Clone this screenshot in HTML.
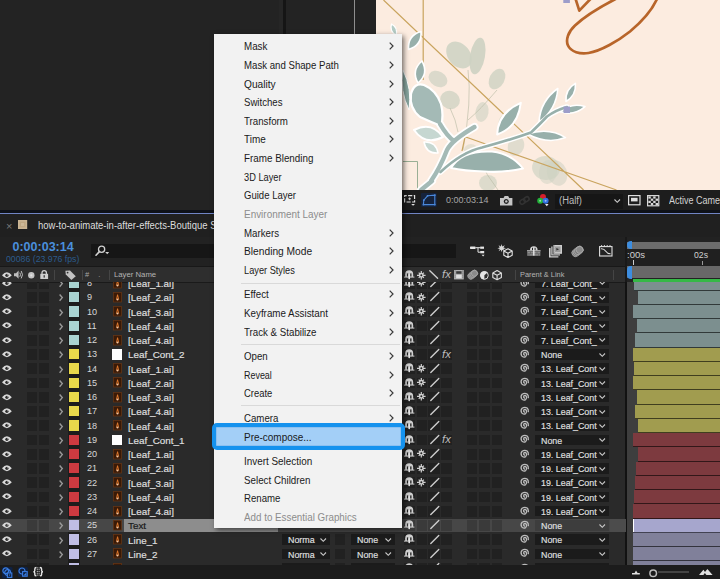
<!DOCTYPE html><html><head><meta charset="utf-8"><title>After Effects</title><style>
*{margin:0;padding:0;box-sizing:border-box}
html,body{width:720px;height:579px;overflow:hidden;background:#232323}
body{position:relative;font-family:"Liberation Sans",sans-serif;font-size:11px;color:#d6d6d6}
.a{position:absolute}
.t{position:absolute;white-space:nowrap;line-height:14px;transform-origin:0 50%}
svg{position:absolute;overflow:visible}
</style></head><body>
<div class="a" style="left:0px;top:0px;width:720px;height:210px;background:#232323;"></div>
<div class="a" style="left:279px;top:0px;width:4.4px;height:210px;background:#262626;"></div>
<div class="a" style="left:283.4px;top:0px;width:2.2px;height:210px;background:#151515;"></div>
<div class="a" style="left:353.9px;top:0px;width:1.4px;height:190px;background:#8e8e8e;"></div>
<svg style="left:376px;top:0" width="344" height="190" viewBox="376 0 344 190"><rect x="376" y="0" width="344" height="190" fill="#fcece0"/><ellipse cx="459" cy="55" rx="11" ry="15" transform="rotate(-40 459 55)" fill="#cdd2c2" opacity="0.85"/><ellipse cx="477.5" cy="56" rx="7.5" ry="18.5" transform="rotate(10 477.5 56)" fill="#cdd2c2" opacity="0.9"/><ellipse cx="497" cy="79" rx="7.5" ry="11" transform="rotate(28 497 79)" fill="#cdd2c2" opacity="0.8"/><ellipse cx="438" cy="79" rx="10" ry="7.5" transform="rotate(30 438 79)" fill="#cdd2c2" opacity="0.7"/><ellipse cx="450" cy="100" rx="10" ry="9" transform="rotate(20 450 100)" fill="#cdd2c2" opacity="0.75"/><ellipse cx="482" cy="112" rx="6.5" ry="10" transform="rotate(10 482 112)" fill="#cdd2c2" opacity="0.6"/><ellipse cx="516" cy="146" rx="8" ry="10" transform="rotate(20 516 146)" fill="#cdd2c2" opacity="0.6"/><ellipse cx="546" cy="168" rx="14" ry="12" transform="rotate(10 546 168)" fill="#cdd2c2" opacity="0.65"/><ellipse cx="488" cy="183" rx="9" ry="8" transform="rotate(0 488 183)" fill="#cdd2c2" opacity="0.65"/><ellipse cx="557" cy="173" rx="10" ry="13" transform="rotate(-20 557 173)" fill="#cdd2c2" opacity="0.55"/><ellipse cx="471" cy="150" rx="7" ry="6" transform="rotate(0 471 150)" fill="#cdd2c2" opacity="0.45"/><ellipse cx="505" cy="121" rx="6" ry="8" transform="rotate(30 505 121)" fill="#cdd2c2" opacity="0.45"/><ellipse cx="548" cy="172" rx="9" ry="12" transform="rotate(10 548 172)" fill="#cdd2c2" opacity="0.5"/><path d="M468 70 Q472 100 463 150 M497 90 Q480 110 468 120 M450 108 Q456 120 458 132 M480 160 Q486 175 498 190" fill="none" stroke="#b9bba6" stroke-width="0.8" opacity=".8"/><path d="M423.2 0 V80 M383.5 0 L583.6 190 M465 136.8 L616.5 190 M465 136.8 L462 151" fill="none" stroke="#c9a45e" stroke-width="1.2"/><path d="M403 161.5 H417.5 V190" fill="none" stroke="#8fa88c" stroke-width="0.9"/><path d="M440 124 Q447 136 454 141 M474.5 127 Q452 140 447 150 Q440 168 431 181 M421 190 L432 181" fill="none" stroke="#ffffff" stroke-width="8" stroke-linecap="round"/><path d="M440.5 172 Q462 152 482 147.5 Q510 140 531 132.5 Q540 124 547 116.5 Q556 110 567 107" fill="none" stroke="#ffffff" stroke-width="5.5" stroke-linecap="round"/><path d="M408.5 49.5 Q422.0 45.5 421.0 31.5 Q407.5 35.5 408.5 49.5Z" fill="#98b0ab" stroke="#ffffff" stroke-width="1.6" stroke-linejoin="round"/><path d="M396.0 35.0 Q398.2 27.7 391.5 24.0 Q389.3 31.3 396.0 35.0Z" fill="#b3cbc4" stroke="#ffffff" stroke-width="1.2" stroke-linejoin="round"/><path d="M418.0 83.0 Q429.1 73.6 422.0 61.0 Q410.9 70.4 418.0 83.0Z" fill="#98b0ab" stroke="#ffffff" stroke-width="1.6" stroke-linejoin="round"/><path d="M403.0 70.0 Q399.7 90.9 409.0 110.0 Q412.3 89.1 403.0 70.0Z" fill="#86a49e" stroke="#ffffff" stroke-width="1" stroke-linejoin="round"/><path d="M441 126 Q431 122 420 117 Q409 108 411 94 Q414 82 424 85 Q436 90 441 104 Q444 116 441 126Z" fill="#a4bab6" stroke="#ffffff" stroke-width="2.2" stroke-linejoin="round"/><path d="M443.0 137.0 Q431.6 120.9 414.0 130.0 Q425.4 146.1 443.0 137.0Z" fill="#c6d7d1" stroke="#ffffff" stroke-width="2" stroke-linejoin="round"/><path d="M424.0 142.0 Q426.1 153.8 438.0 153.0 Q435.9 141.2 424.0 142.0Z" fill="#c6d7d1" stroke="#ffffff" stroke-width="1.5" stroke-linejoin="round"/><path d="M497.2 134.5 Q517.8 127.6 520.8 102.8 Q497.9 112.8 497.2 134.5Z" fill="#98b0ab" stroke="#ffffff" stroke-width="2" stroke-linejoin="round"/><path d="M451 168 Q462 150 492 151.5 Q512 154 523 168.5 Q503 173 484 171.5 Q464 171 451 168Z" fill="#98b0ab" stroke="#ffffff" stroke-width="2" stroke-linejoin="round"/><path d="M539.0 122.0 Q556.4 109.8 557.8 88.5 Q540.4 100.7 539.0 122.0Z" fill="#98b0ab" stroke="#ffffff" stroke-width="1.6" stroke-linejoin="round"/><path d="M566.0 101.5 Q576.4 95.4 575.4 83.4 Q565.0 89.5 566.0 101.5Z" fill="#98b0ab" stroke="#ffffff" stroke-width="1.6" stroke-linejoin="round"/><path d="M560.5 111.8 Q574.2 116.2 585.0 106.6 Q571.3 102.2 560.5 111.8Z" fill="#98b0ab" stroke="#ffffff" stroke-width="1.6" stroke-linejoin="round"/><path d="M527.5 134.0 Q547.6 144.7 565.5 137.6 Q549.2 127.2 527.5 134.0Z" fill="#98b0ab" stroke="#ffffff" stroke-width="1.6" stroke-linejoin="round"/><path d="M440 124 Q447 136 454 141 M474.5 127 Q452 140 447 150 Q440 168 431 181 M421 190 L432 181" fill="none" stroke="#a4bab6" stroke-width="4.4" stroke-linecap="round"/><path d="M440.5 172 Q462 152 482 147.5 Q510 140 531 132.5 Q540 124 547 116.5 Q556 110 567 107" fill="none" stroke="#98b0ab" stroke-width="2.6" stroke-linecap="round"/><rect x="563.3" y="0" width="6.6" height="3" fill="#9d9dca"/><rect x="563.6" y="106.5" width="6.4" height="6.5" fill="#9d9dca"/><path d="M615.5 -1 C600 7 585 16 575 25.5 C568 32 565.5 40 568 45.5 C571 52 580 54.3 588.5 53 C601 51 618 41 630 31.5 C642 21.5 652 10 657 -1 M575.6 -1 L579.3 10.6 L590.5 -1" fill="none" stroke="#b8652a" stroke-width="2.7" stroke-linecap="round" stroke-linejoin="round"/></svg>
<div class="a" style="left:355px;top:190px;width:365px;height:21px;background:#1d1d1d;"></div>
<svg style="left:404.4px;top:194.6px" width="11.4" height="11" viewBox="0 0 11.4 11"><rect x="0.6" y="0.6" width="10" height="6.4" fill="none" stroke="#e0e0e0" stroke-width="1.2" stroke-dasharray="4.2 1.4" stroke-dashoffset="2.1"/><path d="M5.6 2.4 V5.2 M4.2 3.8 H7" stroke="#e0e0e0" stroke-width=".8"/><path d="M7.2 9 H11 L9.1 10.7Z" fill="#e0e0e0"/></svg>
<svg style="left:421px;top:192.8px" width="15.8" height="14" viewBox="0 0 15.8 14"><rect x="0" y="0" width="15.8" height="14" rx="1" fill="#15233d"/><path d="M6.6 2.8 L13.8 2.2 L13.8 11.6 L2.4 11.6 L2.8 7.2Z" fill="none" stroke="#4a88da" stroke-width="1.1"/><g fill="#4a88da"><rect x="5.8" y="2" width="1.6" height="1.6"/><rect x="13" y="1.4" width="1.6" height="1.6"/><rect x="13" y="10.8" width="1.6" height="1.6"/><rect x="1.6" y="10.8" width="1.6" height="1.6"/><rect x="2" y="6.4" width="1.6" height="1.6"/></g></svg>
<div class="t" style="left:446px;top:193.4px;font-size:9px;color:#a6a6a6;">0:00:03:14</div>
<svg style="left:500px;top:196px" width="12.4" height="9.4" viewBox="0 0 12.4 9.4"><path d="M0 2 H3.6 L4.6 0 H8.2 L9.2 2 H12.4 V9.4 H0Z" fill="#c6c6c6"/><circle cx="6.3" cy="5.4" r="2.5" fill="#1e1e1e"/><circle cx="6.3" cy="5.4" r="1.2" fill="#c6c6c6"/></svg>
<svg style="left:518.8px;top:196px" width="11" height="9" viewBox="0 0 11 9"><g fill="none" stroke="#323232" stroke-width="1.6"><rect x="0.8" y="3.6" width="5.6" height="4.2" rx="2.1" transform="rotate(-35 3.6 5.7)"/><rect x="4.6" y="1.2" width="5.6" height="4.2" rx="2.1" transform="rotate(-35 7.4 3.3)"/></g></svg>
<svg style="left:536.8px;top:194px" width="12" height="10.4" viewBox="0 0 12 10.4"><circle cx="6" cy="3" r="3" fill="#d61f2c"/><circle cx="3.2" cy="6.7" r="3" fill="#22b33a"/><circle cx="8.6" cy="6.7" r="3" fill="#2f6fe0"/><circle cx="3.2" cy="6.7" r="1" fill="#9be0a4"/><circle cx="8.6" cy="6.7" r="1" fill="#9cbcf2"/></svg><svg style="left:545.1px;top:204.2px" width="3.6" height="2.2" viewBox="0 0 3.6 2.2"><path d="M0 0 H3.6 L1.8 2.2Z" fill="#e8e8e8"/></svg>
<div class="a" style="left:555px;top:194px;width:68px;height:14.5px;background:#161616;"></div>
<div class="t" style="left:559px;top:193.8px;font-size:10px;color:#bdbdbd;transform:scaleX(0.941);">(Half)</div>
<svg style="left:614px;top:199.1px" width="6.5" height="4" viewBox="0 0 6.5 4"><path d="M0.5 0.5 L3.25 3.3 L6 0.5" fill="none" stroke="#c8c8c8" stroke-width="1.1"/></svg>
<svg style="left:628.4px;top:195px" width="12.6" height="10.4" viewBox="0 0 12.6 10.4"><rect x="0.6" y="0.6" width="11.4" height="9.2" fill="none" stroke="#e0e0e0" stroke-width="1.2"/><rect x="3" y="2.8" width="6.6" height="3.6" fill="#e0e0e0"/></svg>
<svg style="left:647px;top:194.6px" width="12.4" height="11.4" viewBox="0 0 12.4 11.4"><rect x="0.6" y="0.6" width="11.2" height="10.2" fill="none" stroke="#d8d8d8" stroke-width="1.2"/><rect x="1.4" y="1.4" width="2.4" height="2.2" fill="#d8d8d8"/><rect x="1.4" y="5.8" width="2.4" height="2.2" fill="#d8d8d8"/><rect x="3.8" y="3.6" width="2.4" height="2.2" fill="#d8d8d8"/><rect x="3.8" y="8" width="2.4" height="2.2" fill="#d8d8d8"/><rect x="6.2" y="1.4" width="2.4" height="2.2" fill="#d8d8d8"/><rect x="6.2" y="5.8" width="2.4" height="2.2" fill="#d8d8d8"/><rect x="8.6" y="3.6" width="2.4" height="2.2" fill="#d8d8d8"/><rect x="8.6" y="8" width="2.4" height="2.2" fill="#d8d8d8"/></svg>
<div class="t" style="left:669px;top:193.8px;font-size:10px;color:#d2d2d2;transform:scaleX(0.900);">Active Camera</div>
<div class="a" style="left:0px;top:209.5px;width:720px;height:3px;background:#0e1118;"></div>
<div class="a" style="left:0px;top:212.5px;width:720px;height:1.8px;background:#7084c4;"></div>
<div class="a" style="left:0px;top:214.2px;width:720px;height:365px;background:#222222;"></div>
<div class="a" style="left:0px;top:214.2px;width:720px;height:22.8px;background:#202020;"></div>
<div class="t" style="left:6px;top:218.5px;font-size:11px;color:#7a7a7a;">×</div>
<svg style="left:18.2px;top:220.2px" width="9.2" height="9" viewBox="0 0 9.2 9"><rect x="0" y="0" width="9.2" height="9" fill="#cbb594"/><rect x="1.6" y="1.6" width="6" height="5.8" fill="#bfa783"/><rect x="3" y="3" width="3.2" height="3" fill="#cdb898"/></svg>
<div class="t" style="left:38px;top:218.2px;font-size:11px;color:#dddddd;transform:scaleX(0.862);">how-to-animate-in-after-effects-Boutique Shop</div>
<div class="t" style="left:12.5px;top:239.5px;font-size:12.5px;color:#4a8fdc;font-weight:bold;">0:00:03:14</div>
<div class="t" style="left:6.3px;top:252px;font-size:9px;color:#2c5b8c;transform:scaleX(0.971);">00086 (23.976 fps)</div>
<div class="a" style="left:91.3px;top:243.9px;width:364.5px;height:14.2px;background:#161616;"></div>
<svg style="left:95.3px;top:245px" width="15" height="11" viewBox="0 0 15 11"><circle cx="6.6" cy="4.2" r="3.1" fill="none" stroke="#d0d0d0" stroke-width="1.3"/><path d="M4.4 6.6 L1 10.2" stroke="#d0d0d0" stroke-width="1.6" stroke-linecap="round"/><path d="M10.2 7 H14.2 L12.2 9.2Z" fill="#d0d0d0"/></svg>
<svg style="left:469.6px;top:246.4px" width="15" height="11" viewBox="0 0 15 11"><rect x="0" y="0.6" width="5.6" height="2.3" rx=".6" fill="#e6e6e6"/><path d="M5.6 1.7 H10.5 M8 1.7 V6.2 H10.4" fill="none" stroke="#e6e6e6" stroke-width="1"/><rect x="10.2" y="0.6" width="3.8" height="2.2" fill="#e6e6e6"/><rect x="10.2" y="5" width="4" height="2.3" fill="#e6e6e6"/><path d="M11.6 8.8 H14.6 L13.1 10.5Z" fill="#e6e6e6"/></svg>
<svg style="left:497.6px;top:244px" width="15" height="14" viewBox="0 0 15 14"><path d="M3.6 0 L4.3 2.6 L6.8 1.2 L5.4 3.6 L8 4.2 L5.4 4.9 L6.6 7.2 L4.3 5.8 L3.6 8.2 L2.9 5.8 L0.6 7.2 L1.8 4.9 L-.6 4.2 L1.8 3.6 L0.6 1.2 L2.9 2.6Z" fill="#d8d8d8"/><path d="M10 4.8 L14.2 7 V11.3 L10 13.5 L5.8 11.3 V7Z M5.8 7 L10 9.2 L14.2 7 M10 9.2 V13.5" fill="none" stroke="#e2e2e2" stroke-width="1.1" stroke-linejoin="round"/></svg>
<svg style="left:527.4px;top:246px" width="13.6" height="10" viewBox="0 0 13.6 10"><path d="M3 4.2 Q3 0.3 6.8 0.3 Q10.6 0.3 10.6 4.2Z" fill="#d6d6d6"/><rect x="0" y="4.3" width="13.6" height="1.1" fill="#d6d6d6"/><rect x="0.3" y="5.8" width="13" height="4" fill="#8e8e8e"/><path d="M0.3 7.8 H13.3 M3.5 5.8 V7.8 M10 5.8 V7.8 M2 7.8 V9.8 M11.6 7.8 V9.8" stroke="#555" stroke-width=".6"/><rect x="6.1" y="2.4" width="1.4" height="7.2" fill="#e6e6e6"/><rect x="5" y="1.8" width="1" height="2.3" fill="#222"/><rect x="7.6" y="1.8" width="1" height="2.3" fill="#222"/></svg>
<svg style="left:549.3px;top:244.8px" width="13.4" height="12.8" viewBox="0 0 13.4 12.8"><path d="M0 3 H1.6 V11.2 H9.4 V12.6 H0Z" fill="#d0d0d0"/><path d="M2.2 1.6 H3.6 V9.2 H11 V10.6 H2.2Z" fill="#bcbcbc"/><rect x="4.4" y="0" width="8.6" height="8.8" fill="#cfcfcf"/><rect x="6" y="1.4" width="5.6" height="5.8" fill="#9a9a9a"/><path d="M7.4 3 L10 4.3 L7.4 5.6Z" fill="#2a2a2a"/><path d="M5.2 .6 V8.2" stroke="#555" stroke-width=".7" stroke-dasharray="1 1"/></svg>
<svg style="left:571px;top:245.995px" width="13.11" height="10.81" viewBox="0 0 11.4 9.4"><g transform="rotate(-38 5.7 4.7)"><rect x="0.3" y="1.5" width="10.8" height="6.4" rx="3.2" fill="#7c7c7c" stroke="#a8a8a8" stroke-width=".7"/><circle cx="7.9" cy="4.7" r="3" fill="#8a8a8a" stroke="#b0b0b0" stroke-width=".6"/><path d="M5 1.9 A3 3 0 0 0 5 7.5 M2.9 2.3 A3 3 0 0 0 2.9 7.1" fill="none" stroke="#b0b0b0" stroke-width=".6"/></g></svg>
<svg style="left:599.4px;top:245.4px" width="13.6" height="11.6" viewBox="0 0 13.6 11.6"><rect x="0.6" y="1.6" width="12.4" height="9.4" fill="none" stroke="#e0e0e0" stroke-width="1.1"/><path d="M2.6 0 V1.6 M5.4 0 V1.6 M8.2 0 V1.6 M11 0 V1.6" stroke="#e0e0e0" stroke-width=".9"/><path d="M2 3.8 Q5 3.6 6.8 6.3 Q8.6 9 11.6 8.8" fill="none" stroke="#e0e0e0" stroke-width="1.1"/></svg>
<div class="a" style="left:0px;top:265.6px;width:626px;height:1.4px;background:#181818;"></div>
<div class="a" style="left:0px;top:267px;width:626px;height:14.6px;background:#2e2e2e;"></div>
<svg style="left:2px;top:272px" width="9.8" height="6.2" viewBox="0 0 9.8 6.2"><path d="M0 3.3 Q4.9 -2.6 9.8 3.3 Q4.9 9.2 0 3.3Z" fill="#d9d9d9"/><circle cx="4.9" cy="3.3" r="1.6" fill="#2e2e2e"/><circle cx="5.5" cy="2.7" r=".5" fill="#d9d9d9"/></svg>
<svg style="left:14.2px;top:270.3px" width="10" height="9.4" viewBox="0 0 10 9.4"><path d="M0 3.2 H2 L4.6 0.6 V8.8 L2 6.2 H0Z" fill="#bdbdbd"/><path d="M5.8 2.6 Q7.2 4.7 5.8 6.8 M7.2 1 Q9.8 4.7 7.2 8.4" fill="none" stroke="#bdbdbd" stroke-width="1"/></svg>
<svg style="left:28.4px;top:271.9px" width="6.6" height="6.6" viewBox="0 0 6.6 6.6"><circle cx="3.3" cy="3.3" r="3.2" fill="#c4c4c4"/><circle cx="3.3" cy="3.3" r="1.1" fill="#e2e2e2"/></svg>
<svg style="left:40px;top:270px" width="8.4" height="9.2" viewBox="0 0 8.4 9.2"><path d="M2 4 V2.8 Q2 0.6 4.2 0.6 Q6.4 0.6 6.4 2.8 V4" fill="none" stroke="#cfcfcf" stroke-width="1.3"/><rect x="0.3" y="3.8" width="7.8" height="5.2" fill="#cfcfcf"/><rect x="3.6" y="5.2" width="1.2" height="2.4" fill="#2e2e2e"/></svg>
<svg style="left:65.2px;top:270px" width="11.2" height="10.2" viewBox="0 0 11.2 10.2"><path d="M0.4 0.8 L5 0.4 L10.8 6.2 L6.4 10 L0.8 4.6Z" fill="#c2c2c2"/><circle cx="2.6" cy="2.6" r="0.9" fill="#2e2e2e"/></svg>
<div class="t" style="left:85px;top:267.8px;font-size:7.5px;color:#a8a8a8;">#</div>
<div class="t" style="left:98.3px;top:268.4px;font-size:7.5px;color:#a8a8a8;">.</div>
<div class="t" style="left:113.8px;top:267.8px;font-size:8px;color:#b4b4b4;transform:scaleX(0.968);">Layer Name</div>
<svg style="left:404.2px;top:270.1px" width="10.4" height="9.4" viewBox="0 0 10.4 9.4"><path d="M1.2 6.9 V4.2 Q1.2 0.3 5.2 0.3 Q9.2 0.3 9.2 4.2 V6.9Z" fill="#cfcfcf"/><rect x="0" y="6.6" width="10.4" height="1" fill="#cfcfcf"/><rect x="2.9" y="3.4" width="1.3" height="3.1" fill="#2e2e2e"/><rect x="6.2" y="3.4" width="1.3" height="3.1" fill="#2e2e2e"/><rect x="4.4" y="4" width="1.6" height="5.2" rx=".7" fill="#e6e6e6"/></svg>
<svg style="left:417.2px;top:270.7px" width="8.6" height="8.6" viewBox="0 0 8.6 8.6"><path d="M4.3 0 V8.6 M0 4.3 H8.6" stroke="#d0d0d0" stroke-width="1.2"/><path d="M1.7 1.7 L6.9 6.9 M6.9 1.7 L1.7 6.9" stroke="#d0d0d0" stroke-width="1.2"/><circle cx="4.3" cy="4.3" r="2.5" fill="#d0d0d0"/><circle cx="4.3" cy="4.3" r="1" fill="#222"/></svg>
<svg style="left:428.7px;top:269.9px" width="9.4" height="9.2" viewBox="0 0 9.4 9.2"><path d="M0.8 0.8 L8.6 8.2" stroke="#cfcfcf" stroke-width="1.4" stroke-linecap="round"/></svg>
<div class="t" style="left:442px;top:267.4px;font-size:10.5px;color:#bdbdbd;transform:scaleX(1.078);font-style:italic;">fx</div>
<svg style="left:454px;top:270.3px" width="9.8" height="9.4" viewBox="0 0 9.8 9.4"><rect x="0" y="0" width="9.8" height="9.4" fill="#b4b4b4"/><rect x="2.2" y="1.2" width="5.4" height="2.6" fill="#3a3a3a"/><rect x="2.2" y="5" width="5.4" height="3.2" fill="#e0e0e0"/><path d="M1.1 0.6 V8.8 M8.7 0.6 V8.8" stroke="#555" stroke-width=".8" stroke-dasharray="1 1"/></svg>
<svg style="left:466.7px;top:270.3px" width="11.4" height="9.4" viewBox="0 0 11.4 9.4"><g transform="rotate(-38 5.7 4.7)"><rect x="0.3" y="1.5" width="10.8" height="6.4" rx="3.2" fill="#828282" stroke="#a8a8a8" stroke-width=".7"/><circle cx="7.9" cy="4.7" r="3" fill="#8a8a8a" stroke="#b0b0b0" stroke-width=".6"/><path d="M5 1.9 A3 3 0 0 0 5 7.5 M2.9 2.3 A3 3 0 0 0 2.9 7.1" fill="none" stroke="#b0b0b0" stroke-width=".6"/></g></svg>
<svg style="left:480px;top:270.9px" width="8.7" height="8.7" viewBox="0 0 8.7 8.7"><circle cx="4.35" cy="4.35" r="4.2" fill="#e4e4e4"/><path d="M4.35 4.35 L7.6 1.4 A4.2 4.2 0 0 1 4.35 8.55 Z" fill="#2e2e2e"/><circle cx="4.35" cy="4.35" r="3.9" fill="none" stroke="#e4e4e4" stroke-width=".9"/></svg>
<svg style="left:491.8px;top:270.1px" width="10.2" height="10.2" viewBox="0 0 10.2 10.2"><path d="M5.1 0.6 L9.4 2.9 V7.5 L5.1 9.7 L0.8 7.5 V2.9Z M0.8 2.9 L5.1 5.2 L9.4 2.9 M5.1 5.2 V9.7" fill="none" stroke="#dcdcdc" stroke-width="1.15" stroke-linejoin="round"/></svg>
<div class="t" style="left:519.5px;top:267.8px;font-size:8px;color:#b4b4b4;transform:scaleX(0.924);">Parent &amp; Link</div>
<div class="a" style="left:54.4px;top:270px;width:1px;height:10px;background:#454545;"></div>
<div class="a" style="left:81.5px;top:270px;width:1px;height:10px;background:#454545;"></div>
<div class="a" style="left:108.8px;top:270px;width:1px;height:10px;background:#454545;"></div>
<div class="a" style="left:514.6px;top:270px;width:1px;height:10px;background:#454545;"></div>
<div class="a" style="left:613.4px;top:270px;width:1px;height:10px;background:#454545;"></div>
<div class="a" style="left:0;top:281.6px;width:720px;height:283.4px;overflow:hidden;background:#2a2a2a"><div class="a" style="left:0;top:-281.6px;width:720px;height:579px">
<div class="a" style="left:0px;top:281.6px;width:626px;height:1px;background:#1a1a1a;"></div>
<div class="a" style="left:68.4px;top:281.6px;width:11.6px;height:284px;background:#1c1c1c;"></div>
<div class="a" style="left:625.4px;top:282px;width:94.6px;height:284px;background:#3e3e3e;"></div>
<div class="a" style="left:625.4px;top:237px;width:1.8px;height:329px;background:#121212;"></div>
<div class="a" style="left:26.7px;top:277.75px;width:10.3px;height:10.8px;background:#212121;"></div>
<div class="a" style="left:39px;top:277.75px;width:10.3px;height:10.8px;background:#212121;"></div>
<div class="a" style="left:403.8px;top:277.75px;width:11.4px;height:10.8px;background:#212121;"></div>
<div class="a" style="left:416.8px;top:277.75px;width:9.9px;height:10.8px;background:#212121;"></div>
<div class="a" style="left:428.4px;top:277.75px;width:11.3px;height:10.8px;background:#212121;"></div>
<div class="a" style="left:441.4px;top:277.75px;width:10.6px;height:10.8px;background:#212121;"></div>
<div class="a" style="left:466.7px;top:277.75px;width:10.4px;height:10.8px;background:#212121;"></div>
<div class="a" style="left:479.4px;top:277.75px;width:10.4px;height:10.8px;background:#212121;"></div>
<div class="a" style="left:491.7px;top:277.75px;width:10.7px;height:10.8px;background:#212121;"></div>
<svg style="left:2px;top:279.65px" width="9.8" height="6.2" viewBox="0 0 9.8 6.2"><path d="M0 3.3 Q4.9 -2.6 9.8 3.3 Q4.9 9.2 0 3.3Z" fill="#d9d9d9"/><circle cx="4.9" cy="3.3" r="1.6" fill="#2a2a2a"/><circle cx="5.5" cy="2.7" r=".5" fill="#d9d9d9"/></svg>
<svg style="left:59.3px;top:280.05px" width="4" height="7.2" viewBox="0 0 4 7.2"><path d="M0.6 0.5 L3.3 3.6 L0.6 6.7" fill="none" stroke="#9a9a9a" stroke-width="1.4"/></svg>
<div class="a" style="left:69px;top:277.85px;width:10.3px;height:10.2px;background:#a9d3d1;"></div>
<div class="t" style="left:87.2px;top:276.05px;font-size:9.6px;color:#d8d8d8;transform:scaleX(0.950);">8</div>
<svg style="left:113.2px;top:277.65px" width="8.8" height="10.4" viewBox="0 0 8.8 10.4"><rect x="0.4" y="0.4" width="8" height="9.6" fill="#3a1a07" stroke="#633414" stroke-width=".8"/><path d="M3 7.6 L4.1 2.4 L5 2.4 L6.2 7.6 L5.2 7.6 L4.6 4.6 L4 7.6Z" fill="#d8742a"/><ellipse cx="4.5" cy="7.6" rx="1" ry="1" fill="#f3c7a2"/></svg>
<div class="t" style="left:128.2px;top:277.05px;font-size:9.5px;color:#dedede;transform:scaleX(1.037);-webkit-text-stroke:.2px;">[Leaf_1.ai]</div>
<svg style="left:404.2px;top:277.85px" width="10.4" height="9.4" viewBox="0 0 10.4 9.4"><path d="M1.2 6.9 V4.2 Q1.2 0.3 5.2 0.3 Q9.2 0.3 9.2 4.2 V6.9Z" fill="#cfcfcf"/><rect x="0" y="6.6" width="10.4" height="1" fill="#cfcfcf"/><rect x="2.9" y="3.4" width="1.3" height="3.1" fill="#212121"/><rect x="6.2" y="3.4" width="1.3" height="3.1" fill="#212121"/><rect x="4.4" y="4" width="1.6" height="5.2" rx=".7" fill="#e6e6e6"/></svg>
<svg style="left:417.3px;top:278.45px" width="8.6" height="8.6" viewBox="0 0 8.6 8.6"><path d="M4.3 0 V8.6 M0 4.3 H8.6" stroke="#d0d0d0" stroke-width="1.2"/><path d="M1.7 1.7 L6.9 6.9 M6.9 1.7 L1.7 6.9" stroke="#d0d0d0" stroke-width="1.2"/><circle cx="4.3" cy="4.3" r="2.5" fill="#d0d0d0"/><circle cx="4.3" cy="4.3" r="1" fill="#222"/></svg>
<svg style="left:429.7px;top:278.15px" width="9.4" height="9.2" viewBox="0 0 9.4 9.2"><path d="M0.8 8.6 L8.8 0.6" stroke="#cfcfcf" stroke-width="1.4" stroke-linecap="round"/></svg>
<svg style="left:518.6px;top:277.65px" width="10.4" height="10.4" viewBox="0 0 10 10"><path d="M5.3 5.9 Q4 5.2 4.6 3.9 Q5.8 2.8 7 4 Q8 5.8 6.4 7.3 Q4.2 8.5 2.6 6.6 Q1.2 4.2 3 2.2 Q5.4 0.4 7.8 2 Q9.2 3.4 9 5.4" fill="none" stroke="#bcbcbc" stroke-width="1.25" stroke-linecap="round"/></svg>
<div class="a" style="left:535.2px;top:277.85px;width:74.2px;height:10.6px;background:#1b1b1b;"></div>
<div class="t" style="left:540.8px;top:276.95px;font-size:9px;color:#dedede;transform:scaleX(0.985);-webkit-text-stroke:.2px;">7. Leaf_Cont_</div>
<svg style="left:599px;top:281.35px" width="6.5" height="4" viewBox="0 0 6.5 4"><path d="M0.5 0.5 L3.25 3.3 L6 0.5" fill="none" stroke="#c8c8c8" stroke-width="1.1"/></svg>
<div class="a" style="left:634.2px;top:276.25px;width:85.8px;height:14.25px;background:#7c8f8f;border-bottom:1.2px solid rgba(0,0,0,.6)"></div>
<div class="a" style="left:26.7px;top:292px;width:10.3px;height:10.8px;background:#212121;"></div>
<div class="a" style="left:39px;top:292px;width:10.3px;height:10.8px;background:#212121;"></div>
<div class="a" style="left:403.8px;top:292px;width:11.4px;height:10.8px;background:#212121;"></div>
<div class="a" style="left:416.8px;top:292px;width:9.9px;height:10.8px;background:#212121;"></div>
<div class="a" style="left:428.4px;top:292px;width:11.3px;height:10.8px;background:#212121;"></div>
<div class="a" style="left:441.4px;top:292px;width:10.6px;height:10.8px;background:#212121;"></div>
<div class="a" style="left:466.7px;top:292px;width:10.4px;height:10.8px;background:#212121;"></div>
<div class="a" style="left:479.4px;top:292px;width:10.4px;height:10.8px;background:#212121;"></div>
<div class="a" style="left:491.7px;top:292px;width:10.7px;height:10.8px;background:#212121;"></div>
<svg style="left:2px;top:293.9px" width="9.8" height="6.2" viewBox="0 0 9.8 6.2"><path d="M0 3.3 Q4.9 -2.6 9.8 3.3 Q4.9 9.2 0 3.3Z" fill="#d9d9d9"/><circle cx="4.9" cy="3.3" r="1.6" fill="#2a2a2a"/><circle cx="5.5" cy="2.7" r=".5" fill="#d9d9d9"/></svg>
<svg style="left:59.3px;top:294.3px" width="4" height="7.2" viewBox="0 0 4 7.2"><path d="M0.6 0.5 L3.3 3.6 L0.6 6.7" fill="none" stroke="#9a9a9a" stroke-width="1.4"/></svg>
<div class="a" style="left:69px;top:292.1px;width:10.3px;height:10.2px;background:#a9d3d1;"></div>
<div class="t" style="left:87.2px;top:290.3px;font-size:9.6px;color:#d8d8d8;transform:scaleX(0.950);">9</div>
<svg style="left:113.2px;top:291.9px" width="8.8" height="10.4" viewBox="0 0 8.8 10.4"><rect x="0.4" y="0.4" width="8" height="9.6" fill="#3a1a07" stroke="#633414" stroke-width=".8"/><path d="M3 7.6 L4.1 2.4 L5 2.4 L6.2 7.6 L5.2 7.6 L4.6 4.6 L4 7.6Z" fill="#d8742a"/><ellipse cx="4.5" cy="7.6" rx="1" ry="1" fill="#f3c7a2"/></svg>
<div class="t" style="left:128.2px;top:291.3px;font-size:9.5px;color:#dedede;transform:scaleX(1.037);-webkit-text-stroke:.2px;">[Leaf_2.ai]</div>
<svg style="left:404.2px;top:292.1px" width="10.4" height="9.4" viewBox="0 0 10.4 9.4"><path d="M1.2 6.9 V4.2 Q1.2 0.3 5.2 0.3 Q9.2 0.3 9.2 4.2 V6.9Z" fill="#cfcfcf"/><rect x="0" y="6.6" width="10.4" height="1" fill="#cfcfcf"/><rect x="2.9" y="3.4" width="1.3" height="3.1" fill="#212121"/><rect x="6.2" y="3.4" width="1.3" height="3.1" fill="#212121"/><rect x="4.4" y="4" width="1.6" height="5.2" rx=".7" fill="#e6e6e6"/></svg>
<svg style="left:417.3px;top:292.7px" width="8.6" height="8.6" viewBox="0 0 8.6 8.6"><path d="M4.3 0 V8.6 M0 4.3 H8.6" stroke="#d0d0d0" stroke-width="1.2"/><path d="M1.7 1.7 L6.9 6.9 M6.9 1.7 L1.7 6.9" stroke="#d0d0d0" stroke-width="1.2"/><circle cx="4.3" cy="4.3" r="2.5" fill="#d0d0d0"/><circle cx="4.3" cy="4.3" r="1" fill="#222"/></svg>
<svg style="left:429.7px;top:292.4px" width="9.4" height="9.2" viewBox="0 0 9.4 9.2"><path d="M0.8 8.6 L8.8 0.6" stroke="#cfcfcf" stroke-width="1.4" stroke-linecap="round"/></svg>
<svg style="left:518.6px;top:291.9px" width="10.4" height="10.4" viewBox="0 0 10 10"><path d="M5.3 5.9 Q4 5.2 4.6 3.9 Q5.8 2.8 7 4 Q8 5.8 6.4 7.3 Q4.2 8.5 2.6 6.6 Q1.2 4.2 3 2.2 Q5.4 0.4 7.8 2 Q9.2 3.4 9 5.4" fill="none" stroke="#bcbcbc" stroke-width="1.25" stroke-linecap="round"/></svg>
<div class="a" style="left:535.2px;top:292.1px;width:74.2px;height:10.6px;background:#1b1b1b;"></div>
<div class="t" style="left:540.8px;top:291.2px;font-size:9px;color:#dedede;transform:scaleX(0.985);-webkit-text-stroke:.2px;">7. Leaf_Cont_</div>
<svg style="left:599px;top:295.6px" width="6.5" height="4" viewBox="0 0 6.5 4"><path d="M0.5 0.5 L3.25 3.3 L6 0.5" fill="none" stroke="#c8c8c8" stroke-width="1.1"/></svg>
<div class="a" style="left:638.3px;top:290.5px;width:81.7px;height:14.25px;background:#7c8f8f;border-bottom:1.2px solid rgba(0,0,0,.6)"></div>
<div class="a" style="left:26.7px;top:306.25px;width:10.3px;height:10.8px;background:#212121;"></div>
<div class="a" style="left:39px;top:306.25px;width:10.3px;height:10.8px;background:#212121;"></div>
<div class="a" style="left:403.8px;top:306.25px;width:11.4px;height:10.8px;background:#212121;"></div>
<div class="a" style="left:416.8px;top:306.25px;width:9.9px;height:10.8px;background:#212121;"></div>
<div class="a" style="left:428.4px;top:306.25px;width:11.3px;height:10.8px;background:#212121;"></div>
<div class="a" style="left:441.4px;top:306.25px;width:10.6px;height:10.8px;background:#212121;"></div>
<div class="a" style="left:466.7px;top:306.25px;width:10.4px;height:10.8px;background:#212121;"></div>
<div class="a" style="left:479.4px;top:306.25px;width:10.4px;height:10.8px;background:#212121;"></div>
<div class="a" style="left:491.7px;top:306.25px;width:10.7px;height:10.8px;background:#212121;"></div>
<svg style="left:2px;top:308.15px" width="9.8" height="6.2" viewBox="0 0 9.8 6.2"><path d="M0 3.3 Q4.9 -2.6 9.8 3.3 Q4.9 9.2 0 3.3Z" fill="#d9d9d9"/><circle cx="4.9" cy="3.3" r="1.6" fill="#2a2a2a"/><circle cx="5.5" cy="2.7" r=".5" fill="#d9d9d9"/></svg>
<svg style="left:59.3px;top:308.55px" width="4" height="7.2" viewBox="0 0 4 7.2"><path d="M0.6 0.5 L3.3 3.6 L0.6 6.7" fill="none" stroke="#9a9a9a" stroke-width="1.4"/></svg>
<div class="a" style="left:69px;top:306.35px;width:10.3px;height:10.2px;background:#a9d3d1;"></div>
<div class="t" style="left:87.2px;top:304.55px;font-size:9.6px;color:#d8d8d8;transform:scaleX(0.950);">10</div>
<svg style="left:113.2px;top:306.15px" width="8.8" height="10.4" viewBox="0 0 8.8 10.4"><rect x="0.4" y="0.4" width="8" height="9.6" fill="#3a1a07" stroke="#633414" stroke-width=".8"/><path d="M3 7.6 L4.1 2.4 L5 2.4 L6.2 7.6 L5.2 7.6 L4.6 4.6 L4 7.6Z" fill="#d8742a"/><ellipse cx="4.5" cy="7.6" rx="1" ry="1" fill="#f3c7a2"/></svg>
<div class="t" style="left:128.2px;top:305.55px;font-size:9.5px;color:#dedede;transform:scaleX(1.037);-webkit-text-stroke:.2px;">[Leaf_3.ai]</div>
<svg style="left:404.2px;top:306.35px" width="10.4" height="9.4" viewBox="0 0 10.4 9.4"><path d="M1.2 6.9 V4.2 Q1.2 0.3 5.2 0.3 Q9.2 0.3 9.2 4.2 V6.9Z" fill="#cfcfcf"/><rect x="0" y="6.6" width="10.4" height="1" fill="#cfcfcf"/><rect x="2.9" y="3.4" width="1.3" height="3.1" fill="#212121"/><rect x="6.2" y="3.4" width="1.3" height="3.1" fill="#212121"/><rect x="4.4" y="4" width="1.6" height="5.2" rx=".7" fill="#e6e6e6"/></svg>
<svg style="left:417.3px;top:306.95px" width="8.6" height="8.6" viewBox="0 0 8.6 8.6"><path d="M4.3 0 V8.6 M0 4.3 H8.6" stroke="#d0d0d0" stroke-width="1.2"/><path d="M1.7 1.7 L6.9 6.9 M6.9 1.7 L1.7 6.9" stroke="#d0d0d0" stroke-width="1.2"/><circle cx="4.3" cy="4.3" r="2.5" fill="#d0d0d0"/><circle cx="4.3" cy="4.3" r="1" fill="#222"/></svg>
<svg style="left:429.7px;top:306.65px" width="9.4" height="9.2" viewBox="0 0 9.4 9.2"><path d="M0.8 8.6 L8.8 0.6" stroke="#cfcfcf" stroke-width="1.4" stroke-linecap="round"/></svg>
<svg style="left:518.6px;top:306.15px" width="10.4" height="10.4" viewBox="0 0 10 10"><path d="M5.3 5.9 Q4 5.2 4.6 3.9 Q5.8 2.8 7 4 Q8 5.8 6.4 7.3 Q4.2 8.5 2.6 6.6 Q1.2 4.2 3 2.2 Q5.4 0.4 7.8 2 Q9.2 3.4 9 5.4" fill="none" stroke="#bcbcbc" stroke-width="1.25" stroke-linecap="round"/></svg>
<div class="a" style="left:535.2px;top:306.35px;width:74.2px;height:10.6px;background:#1b1b1b;"></div>
<div class="t" style="left:540.8px;top:305.45px;font-size:9px;color:#dedede;transform:scaleX(0.985);-webkit-text-stroke:.2px;">7. Leaf_Cont_</div>
<svg style="left:599px;top:309.85px" width="6.5" height="4" viewBox="0 0 6.5 4"><path d="M0.5 0.5 L3.25 3.3 L6 0.5" fill="none" stroke="#c8c8c8" stroke-width="1.1"/></svg>
<div class="a" style="left:632.8px;top:304.75px;width:87.2px;height:14.25px;background:#7c8f8f;border-bottom:1.2px solid rgba(0,0,0,.6)"></div>
<div class="a" style="left:26.7px;top:320.5px;width:10.3px;height:10.8px;background:#212121;"></div>
<div class="a" style="left:39px;top:320.5px;width:10.3px;height:10.8px;background:#212121;"></div>
<div class="a" style="left:403.8px;top:320.5px;width:11.4px;height:10.8px;background:#212121;"></div>
<div class="a" style="left:416.8px;top:320.5px;width:9.9px;height:10.8px;background:#212121;"></div>
<div class="a" style="left:428.4px;top:320.5px;width:11.3px;height:10.8px;background:#212121;"></div>
<div class="a" style="left:441.4px;top:320.5px;width:10.6px;height:10.8px;background:#212121;"></div>
<div class="a" style="left:466.7px;top:320.5px;width:10.4px;height:10.8px;background:#212121;"></div>
<div class="a" style="left:479.4px;top:320.5px;width:10.4px;height:10.8px;background:#212121;"></div>
<div class="a" style="left:491.7px;top:320.5px;width:10.7px;height:10.8px;background:#212121;"></div>
<svg style="left:2px;top:322.4px" width="9.8" height="6.2" viewBox="0 0 9.8 6.2"><path d="M0 3.3 Q4.9 -2.6 9.8 3.3 Q4.9 9.2 0 3.3Z" fill="#d9d9d9"/><circle cx="4.9" cy="3.3" r="1.6" fill="#2a2a2a"/><circle cx="5.5" cy="2.7" r=".5" fill="#d9d9d9"/></svg>
<svg style="left:59.3px;top:322.8px" width="4" height="7.2" viewBox="0 0 4 7.2"><path d="M0.6 0.5 L3.3 3.6 L0.6 6.7" fill="none" stroke="#9a9a9a" stroke-width="1.4"/></svg>
<div class="a" style="left:69px;top:320.6px;width:10.3px;height:10.2px;background:#a9d3d1;"></div>
<div class="t" style="left:87.2px;top:318.8px;font-size:9.6px;color:#d8d8d8;transform:scaleX(0.950);">11</div>
<svg style="left:113.2px;top:320.4px" width="8.8" height="10.4" viewBox="0 0 8.8 10.4"><rect x="0.4" y="0.4" width="8" height="9.6" fill="#3a1a07" stroke="#633414" stroke-width=".8"/><path d="M3 7.6 L4.1 2.4 L5 2.4 L6.2 7.6 L5.2 7.6 L4.6 4.6 L4 7.6Z" fill="#d8742a"/><ellipse cx="4.5" cy="7.6" rx="1" ry="1" fill="#f3c7a2"/></svg>
<div class="t" style="left:128.2px;top:319.8px;font-size:9.5px;color:#dedede;transform:scaleX(1.037);-webkit-text-stroke:.2px;">[Leaf_4.ai]</div>
<svg style="left:404.2px;top:320.6px" width="10.4" height="9.4" viewBox="0 0 10.4 9.4"><path d="M1.2 6.9 V4.2 Q1.2 0.3 5.2 0.3 Q9.2 0.3 9.2 4.2 V6.9Z" fill="#cfcfcf"/><rect x="0" y="6.6" width="10.4" height="1" fill="#cfcfcf"/><rect x="2.9" y="3.4" width="1.3" height="3.1" fill="#212121"/><rect x="6.2" y="3.4" width="1.3" height="3.1" fill="#212121"/><rect x="4.4" y="4" width="1.6" height="5.2" rx=".7" fill="#e6e6e6"/></svg>
<svg style="left:429.7px;top:320.9px" width="9.4" height="9.2" viewBox="0 0 9.4 9.2"><path d="M0.8 8.6 L8.8 0.6" stroke="#cfcfcf" stroke-width="1.4" stroke-linecap="round"/></svg>
<svg style="left:518.6px;top:320.4px" width="10.4" height="10.4" viewBox="0 0 10 10"><path d="M5.3 5.9 Q4 5.2 4.6 3.9 Q5.8 2.8 7 4 Q8 5.8 6.4 7.3 Q4.2 8.5 2.6 6.6 Q1.2 4.2 3 2.2 Q5.4 0.4 7.8 2 Q9.2 3.4 9 5.4" fill="none" stroke="#bcbcbc" stroke-width="1.25" stroke-linecap="round"/></svg>
<div class="a" style="left:535.2px;top:320.6px;width:74.2px;height:10.6px;background:#1b1b1b;"></div>
<div class="t" style="left:540.8px;top:319.7px;font-size:9px;color:#dedede;transform:scaleX(0.985);-webkit-text-stroke:.2px;">7. Leaf_Cont_</div>
<svg style="left:599px;top:324.1px" width="6.5" height="4" viewBox="0 0 6.5 4"><path d="M0.5 0.5 L3.25 3.3 L6 0.5" fill="none" stroke="#c8c8c8" stroke-width="1.1"/></svg>
<div class="a" style="left:637.2px;top:319px;width:82.8px;height:14.25px;background:#7c8f8f;border-bottom:1.2px solid rgba(0,0,0,.6)"></div>
<div class="a" style="left:26.7px;top:334.75px;width:10.3px;height:10.8px;background:#212121;"></div>
<div class="a" style="left:39px;top:334.75px;width:10.3px;height:10.8px;background:#212121;"></div>
<div class="a" style="left:403.8px;top:334.75px;width:11.4px;height:10.8px;background:#212121;"></div>
<div class="a" style="left:416.8px;top:334.75px;width:9.9px;height:10.8px;background:#212121;"></div>
<div class="a" style="left:428.4px;top:334.75px;width:11.3px;height:10.8px;background:#212121;"></div>
<div class="a" style="left:441.4px;top:334.75px;width:10.6px;height:10.8px;background:#212121;"></div>
<div class="a" style="left:466.7px;top:334.75px;width:10.4px;height:10.8px;background:#212121;"></div>
<div class="a" style="left:479.4px;top:334.75px;width:10.4px;height:10.8px;background:#212121;"></div>
<div class="a" style="left:491.7px;top:334.75px;width:10.7px;height:10.8px;background:#212121;"></div>
<svg style="left:2px;top:336.65px" width="9.8" height="6.2" viewBox="0 0 9.8 6.2"><path d="M0 3.3 Q4.9 -2.6 9.8 3.3 Q4.9 9.2 0 3.3Z" fill="#d9d9d9"/><circle cx="4.9" cy="3.3" r="1.6" fill="#2a2a2a"/><circle cx="5.5" cy="2.7" r=".5" fill="#d9d9d9"/></svg>
<svg style="left:59.3px;top:337.05px" width="4" height="7.2" viewBox="0 0 4 7.2"><path d="M0.6 0.5 L3.3 3.6 L0.6 6.7" fill="none" stroke="#9a9a9a" stroke-width="1.4"/></svg>
<div class="a" style="left:69px;top:334.85px;width:10.3px;height:10.2px;background:#a9d3d1;"></div>
<div class="t" style="left:87.2px;top:333.05px;font-size:9.6px;color:#d8d8d8;transform:scaleX(0.950);">12</div>
<svg style="left:113.2px;top:334.65px" width="8.8" height="10.4" viewBox="0 0 8.8 10.4"><rect x="0.4" y="0.4" width="8" height="9.6" fill="#3a1a07" stroke="#633414" stroke-width=".8"/><path d="M3 7.6 L4.1 2.4 L5 2.4 L6.2 7.6 L5.2 7.6 L4.6 4.6 L4 7.6Z" fill="#d8742a"/><ellipse cx="4.5" cy="7.6" rx="1" ry="1" fill="#f3c7a2"/></svg>
<div class="t" style="left:128.2px;top:334.05px;font-size:9.5px;color:#dedede;transform:scaleX(1.037);-webkit-text-stroke:.2px;">[Leaf_4.ai]</div>
<svg style="left:404.2px;top:334.85px" width="10.4" height="9.4" viewBox="0 0 10.4 9.4"><path d="M1.2 6.9 V4.2 Q1.2 0.3 5.2 0.3 Q9.2 0.3 9.2 4.2 V6.9Z" fill="#cfcfcf"/><rect x="0" y="6.6" width="10.4" height="1" fill="#cfcfcf"/><rect x="2.9" y="3.4" width="1.3" height="3.1" fill="#212121"/><rect x="6.2" y="3.4" width="1.3" height="3.1" fill="#212121"/><rect x="4.4" y="4" width="1.6" height="5.2" rx=".7" fill="#e6e6e6"/></svg>
<svg style="left:429.7px;top:335.15px" width="9.4" height="9.2" viewBox="0 0 9.4 9.2"><path d="M0.8 8.6 L8.8 0.6" stroke="#cfcfcf" stroke-width="1.4" stroke-linecap="round"/></svg>
<svg style="left:518.6px;top:334.65px" width="10.4" height="10.4" viewBox="0 0 10 10"><path d="M5.3 5.9 Q4 5.2 4.6 3.9 Q5.8 2.8 7 4 Q8 5.8 6.4 7.3 Q4.2 8.5 2.6 6.6 Q1.2 4.2 3 2.2 Q5.4 0.4 7.8 2 Q9.2 3.4 9 5.4" fill="none" stroke="#bcbcbc" stroke-width="1.25" stroke-linecap="round"/></svg>
<div class="a" style="left:535.2px;top:334.85px;width:74.2px;height:10.6px;background:#1b1b1b;"></div>
<div class="t" style="left:540.8px;top:333.95px;font-size:9px;color:#dedede;transform:scaleX(0.985);-webkit-text-stroke:.2px;">7. Leaf_Cont_</div>
<svg style="left:599px;top:338.35px" width="6.5" height="4" viewBox="0 0 6.5 4"><path d="M0.5 0.5 L3.25 3.3 L6 0.5" fill="none" stroke="#c8c8c8" stroke-width="1.1"/></svg>
<div class="a" style="left:635px;top:333.25px;width:85px;height:14.25px;background:#7c8f8f;border-bottom:1.2px solid rgba(0,0,0,.6)"></div>
<div class="a" style="left:26.7px;top:349px;width:10.3px;height:10.8px;background:#212121;"></div>
<div class="a" style="left:39px;top:349px;width:10.3px;height:10.8px;background:#212121;"></div>
<div class="a" style="left:403.8px;top:349px;width:11.4px;height:10.8px;background:#212121;"></div>
<div class="a" style="left:416.8px;top:349px;width:9.9px;height:10.8px;background:#212121;"></div>
<div class="a" style="left:428.4px;top:349px;width:11.3px;height:10.8px;background:#212121;"></div>
<div class="a" style="left:441.4px;top:349px;width:10.6px;height:10.8px;background:#212121;"></div>
<div class="a" style="left:466.7px;top:349px;width:10.4px;height:10.8px;background:#212121;"></div>
<div class="a" style="left:479.4px;top:349px;width:10.4px;height:10.8px;background:#212121;"></div>
<div class="a" style="left:491.7px;top:349px;width:10.7px;height:10.8px;background:#212121;"></div>
<svg style="left:2px;top:350.9px" width="9.8" height="6.2" viewBox="0 0 9.8 6.2"><path d="M0 3.3 Q4.9 -2.6 9.8 3.3 Q4.9 9.2 0 3.3Z" fill="#d9d9d9"/><circle cx="4.9" cy="3.3" r="1.6" fill="#2a2a2a"/><circle cx="5.5" cy="2.7" r=".5" fill="#d9d9d9"/></svg>
<svg style="left:59.3px;top:351.3px" width="4" height="7.2" viewBox="0 0 4 7.2"><path d="M0.6 0.5 L3.3 3.6 L0.6 6.7" fill="none" stroke="#9a9a9a" stroke-width="1.4"/></svg>
<div class="a" style="left:69px;top:349.1px;width:10.3px;height:10.2px;background:#e8d84b;"></div>
<div class="t" style="left:87.2px;top:347.3px;font-size:9.6px;color:#d8d8d8;transform:scaleX(0.950);">13</div>
<div class="a" style="left:112px;top:349.3px;width:10px;height:10.4px;background:#ffffff;"></div>
<div class="t" style="left:128.2px;top:348.3px;font-size:9.5px;color:#dedede;transform:scaleX(1.037);-webkit-text-stroke:.2px;">Leaf_Cont_2</div>
<svg style="left:404.2px;top:349.1px" width="10.4" height="9.4" viewBox="0 0 10.4 9.4"><path d="M1.2 6.9 V4.2 Q1.2 0.3 5.2 0.3 Q9.2 0.3 9.2 4.2 V6.9Z" fill="#cfcfcf"/><rect x="0" y="6.6" width="10.4" height="1" fill="#cfcfcf"/><rect x="2.9" y="3.4" width="1.3" height="3.1" fill="#212121"/><rect x="6.2" y="3.4" width="1.3" height="3.1" fill="#212121"/><rect x="4.4" y="4" width="1.6" height="5.2" rx=".7" fill="#e6e6e6"/></svg>
<svg style="left:429.7px;top:349.4px" width="9.4" height="9.2" viewBox="0 0 9.4 9.2"><path d="M0.8 8.6 L8.8 0.6" stroke="#cfcfcf" stroke-width="1.4" stroke-linecap="round"/></svg>
<div class="t" style="left:442px;top:346.7px;font-size:10.5px;color:#bdbdbd;transform:scaleX(1.078);font-style:italic;">fx</div>
<svg style="left:518.6px;top:348.9px" width="10.4" height="10.4" viewBox="0 0 10 10"><path d="M5.3 5.9 Q4 5.2 4.6 3.9 Q5.8 2.8 7 4 Q8 5.8 6.4 7.3 Q4.2 8.5 2.6 6.6 Q1.2 4.2 3 2.2 Q5.4 0.4 7.8 2 Q9.2 3.4 9 5.4" fill="none" stroke="#bcbcbc" stroke-width="1.25" stroke-linecap="round"/></svg>
<div class="a" style="left:535.2px;top:349.1px;width:74.2px;height:10.6px;background:#1b1b1b;"></div>
<div class="t" style="left:540.8px;top:348.2px;font-size:9px;color:#dedede;transform:scaleX(0.985);-webkit-text-stroke:.2px;">None</div>
<svg style="left:599px;top:352.6px" width="6.5" height="4" viewBox="0 0 6.5 4"><path d="M0.5 0.5 L3.25 3.3 L6 0.5" fill="none" stroke="#c8c8c8" stroke-width="1.1"/></svg>
<div class="a" style="left:633px;top:347.5px;width:87px;height:14.25px;background:#a19c4f;border-bottom:1.2px solid rgba(0,0,0,.6)"></div>
<div class="a" style="left:26.7px;top:363.25px;width:10.3px;height:10.8px;background:#212121;"></div>
<div class="a" style="left:39px;top:363.25px;width:10.3px;height:10.8px;background:#212121;"></div>
<div class="a" style="left:403.8px;top:363.25px;width:11.4px;height:10.8px;background:#212121;"></div>
<div class="a" style="left:416.8px;top:363.25px;width:9.9px;height:10.8px;background:#212121;"></div>
<div class="a" style="left:428.4px;top:363.25px;width:11.3px;height:10.8px;background:#212121;"></div>
<div class="a" style="left:441.4px;top:363.25px;width:10.6px;height:10.8px;background:#212121;"></div>
<div class="a" style="left:466.7px;top:363.25px;width:10.4px;height:10.8px;background:#212121;"></div>
<div class="a" style="left:479.4px;top:363.25px;width:10.4px;height:10.8px;background:#212121;"></div>
<div class="a" style="left:491.7px;top:363.25px;width:10.7px;height:10.8px;background:#212121;"></div>
<svg style="left:2px;top:365.15px" width="9.8" height="6.2" viewBox="0 0 9.8 6.2"><path d="M0 3.3 Q4.9 -2.6 9.8 3.3 Q4.9 9.2 0 3.3Z" fill="#d9d9d9"/><circle cx="4.9" cy="3.3" r="1.6" fill="#2a2a2a"/><circle cx="5.5" cy="2.7" r=".5" fill="#d9d9d9"/></svg>
<svg style="left:59.3px;top:365.55px" width="4" height="7.2" viewBox="0 0 4 7.2"><path d="M0.6 0.5 L3.3 3.6 L0.6 6.7" fill="none" stroke="#9a9a9a" stroke-width="1.4"/></svg>
<div class="a" style="left:69px;top:363.35px;width:10.3px;height:10.2px;background:#e8d84b;"></div>
<div class="t" style="left:87.2px;top:361.55px;font-size:9.6px;color:#d8d8d8;transform:scaleX(0.950);">14</div>
<svg style="left:113.2px;top:363.15px" width="8.8" height="10.4" viewBox="0 0 8.8 10.4"><rect x="0.4" y="0.4" width="8" height="9.6" fill="#3a1a07" stroke="#633414" stroke-width=".8"/><path d="M3 7.6 L4.1 2.4 L5 2.4 L6.2 7.6 L5.2 7.6 L4.6 4.6 L4 7.6Z" fill="#d8742a"/><ellipse cx="4.5" cy="7.6" rx="1" ry="1" fill="#f3c7a2"/></svg>
<div class="t" style="left:128.2px;top:362.55px;font-size:9.5px;color:#dedede;transform:scaleX(1.037);-webkit-text-stroke:.2px;">[Leaf_1.ai]</div>
<svg style="left:404.2px;top:363.35px" width="10.4" height="9.4" viewBox="0 0 10.4 9.4"><path d="M1.2 6.9 V4.2 Q1.2 0.3 5.2 0.3 Q9.2 0.3 9.2 4.2 V6.9Z" fill="#cfcfcf"/><rect x="0" y="6.6" width="10.4" height="1" fill="#cfcfcf"/><rect x="2.9" y="3.4" width="1.3" height="3.1" fill="#212121"/><rect x="6.2" y="3.4" width="1.3" height="3.1" fill="#212121"/><rect x="4.4" y="4" width="1.6" height="5.2" rx=".7" fill="#e6e6e6"/></svg>
<svg style="left:417.3px;top:363.95px" width="8.6" height="8.6" viewBox="0 0 8.6 8.6"><path d="M4.3 0 V8.6 M0 4.3 H8.6" stroke="#d0d0d0" stroke-width="1.2"/><path d="M1.7 1.7 L6.9 6.9 M6.9 1.7 L1.7 6.9" stroke="#d0d0d0" stroke-width="1.2"/><circle cx="4.3" cy="4.3" r="2.5" fill="#d0d0d0"/><circle cx="4.3" cy="4.3" r="1" fill="#222"/></svg>
<svg style="left:429.7px;top:363.65px" width="9.4" height="9.2" viewBox="0 0 9.4 9.2"><path d="M0.8 8.6 L8.8 0.6" stroke="#cfcfcf" stroke-width="1.4" stroke-linecap="round"/></svg>
<svg style="left:518.6px;top:363.15px" width="10.4" height="10.4" viewBox="0 0 10 10"><path d="M5.3 5.9 Q4 5.2 4.6 3.9 Q5.8 2.8 7 4 Q8 5.8 6.4 7.3 Q4.2 8.5 2.6 6.6 Q1.2 4.2 3 2.2 Q5.4 0.4 7.8 2 Q9.2 3.4 9 5.4" fill="none" stroke="#bcbcbc" stroke-width="1.25" stroke-linecap="round"/></svg>
<div class="a" style="left:535.2px;top:363.35px;width:74.2px;height:10.6px;background:#1b1b1b;"></div>
<div class="t" style="left:540.8px;top:362.45px;font-size:9px;color:#dedede;transform:scaleX(0.985);-webkit-text-stroke:.2px;">13. Leaf_Cont</div>
<svg style="left:599px;top:366.85px" width="6.5" height="4" viewBox="0 0 6.5 4"><path d="M0.5 0.5 L3.25 3.3 L6 0.5" fill="none" stroke="#c8c8c8" stroke-width="1.1"/></svg>
<div class="a" style="left:634.2px;top:361.75px;width:85.8px;height:14.25px;background:#a19c4f;border-bottom:1.2px solid rgba(0,0,0,.6)"></div>
<div class="a" style="left:26.7px;top:377.5px;width:10.3px;height:10.8px;background:#212121;"></div>
<div class="a" style="left:39px;top:377.5px;width:10.3px;height:10.8px;background:#212121;"></div>
<div class="a" style="left:403.8px;top:377.5px;width:11.4px;height:10.8px;background:#212121;"></div>
<div class="a" style="left:416.8px;top:377.5px;width:9.9px;height:10.8px;background:#212121;"></div>
<div class="a" style="left:428.4px;top:377.5px;width:11.3px;height:10.8px;background:#212121;"></div>
<div class="a" style="left:441.4px;top:377.5px;width:10.6px;height:10.8px;background:#212121;"></div>
<div class="a" style="left:466.7px;top:377.5px;width:10.4px;height:10.8px;background:#212121;"></div>
<div class="a" style="left:479.4px;top:377.5px;width:10.4px;height:10.8px;background:#212121;"></div>
<div class="a" style="left:491.7px;top:377.5px;width:10.7px;height:10.8px;background:#212121;"></div>
<svg style="left:2px;top:379.4px" width="9.8" height="6.2" viewBox="0 0 9.8 6.2"><path d="M0 3.3 Q4.9 -2.6 9.8 3.3 Q4.9 9.2 0 3.3Z" fill="#d9d9d9"/><circle cx="4.9" cy="3.3" r="1.6" fill="#2a2a2a"/><circle cx="5.5" cy="2.7" r=".5" fill="#d9d9d9"/></svg>
<svg style="left:59.3px;top:379.8px" width="4" height="7.2" viewBox="0 0 4 7.2"><path d="M0.6 0.5 L3.3 3.6 L0.6 6.7" fill="none" stroke="#9a9a9a" stroke-width="1.4"/></svg>
<div class="a" style="left:69px;top:377.6px;width:10.3px;height:10.2px;background:#e8d84b;"></div>
<div class="t" style="left:87.2px;top:375.8px;font-size:9.6px;color:#d8d8d8;transform:scaleX(0.950);">15</div>
<svg style="left:113.2px;top:377.4px" width="8.8" height="10.4" viewBox="0 0 8.8 10.4"><rect x="0.4" y="0.4" width="8" height="9.6" fill="#3a1a07" stroke="#633414" stroke-width=".8"/><path d="M3 7.6 L4.1 2.4 L5 2.4 L6.2 7.6 L5.2 7.6 L4.6 4.6 L4 7.6Z" fill="#d8742a"/><ellipse cx="4.5" cy="7.6" rx="1" ry="1" fill="#f3c7a2"/></svg>
<div class="t" style="left:128.2px;top:376.8px;font-size:9.5px;color:#dedede;transform:scaleX(1.037);-webkit-text-stroke:.2px;">[Leaf_2.ai]</div>
<svg style="left:404.2px;top:377.6px" width="10.4" height="9.4" viewBox="0 0 10.4 9.4"><path d="M1.2 6.9 V4.2 Q1.2 0.3 5.2 0.3 Q9.2 0.3 9.2 4.2 V6.9Z" fill="#cfcfcf"/><rect x="0" y="6.6" width="10.4" height="1" fill="#cfcfcf"/><rect x="2.9" y="3.4" width="1.3" height="3.1" fill="#212121"/><rect x="6.2" y="3.4" width="1.3" height="3.1" fill="#212121"/><rect x="4.4" y="4" width="1.6" height="5.2" rx=".7" fill="#e6e6e6"/></svg>
<svg style="left:417.3px;top:378.2px" width="8.6" height="8.6" viewBox="0 0 8.6 8.6"><path d="M4.3 0 V8.6 M0 4.3 H8.6" stroke="#d0d0d0" stroke-width="1.2"/><path d="M1.7 1.7 L6.9 6.9 M6.9 1.7 L1.7 6.9" stroke="#d0d0d0" stroke-width="1.2"/><circle cx="4.3" cy="4.3" r="2.5" fill="#d0d0d0"/><circle cx="4.3" cy="4.3" r="1" fill="#222"/></svg>
<svg style="left:429.7px;top:377.9px" width="9.4" height="9.2" viewBox="0 0 9.4 9.2"><path d="M0.8 8.6 L8.8 0.6" stroke="#cfcfcf" stroke-width="1.4" stroke-linecap="round"/></svg>
<svg style="left:518.6px;top:377.4px" width="10.4" height="10.4" viewBox="0 0 10 10"><path d="M5.3 5.9 Q4 5.2 4.6 3.9 Q5.8 2.8 7 4 Q8 5.8 6.4 7.3 Q4.2 8.5 2.6 6.6 Q1.2 4.2 3 2.2 Q5.4 0.4 7.8 2 Q9.2 3.4 9 5.4" fill="none" stroke="#bcbcbc" stroke-width="1.25" stroke-linecap="round"/></svg>
<div class="a" style="left:535.2px;top:377.6px;width:74.2px;height:10.6px;background:#1b1b1b;"></div>
<div class="t" style="left:540.8px;top:376.7px;font-size:9px;color:#dedede;transform:scaleX(0.985);-webkit-text-stroke:.2px;">13. Leaf_Cont</div>
<svg style="left:599px;top:381.1px" width="6.5" height="4" viewBox="0 0 6.5 4"><path d="M0.5 0.5 L3.25 3.3 L6 0.5" fill="none" stroke="#c8c8c8" stroke-width="1.1"/></svg>
<div class="a" style="left:633px;top:376px;width:87px;height:14.25px;background:#a19c4f;border-bottom:1.2px solid rgba(0,0,0,.6)"></div>
<div class="a" style="left:26.7px;top:391.75px;width:10.3px;height:10.8px;background:#212121;"></div>
<div class="a" style="left:39px;top:391.75px;width:10.3px;height:10.8px;background:#212121;"></div>
<div class="a" style="left:403.8px;top:391.75px;width:11.4px;height:10.8px;background:#212121;"></div>
<div class="a" style="left:416.8px;top:391.75px;width:9.9px;height:10.8px;background:#212121;"></div>
<div class="a" style="left:428.4px;top:391.75px;width:11.3px;height:10.8px;background:#212121;"></div>
<div class="a" style="left:441.4px;top:391.75px;width:10.6px;height:10.8px;background:#212121;"></div>
<div class="a" style="left:466.7px;top:391.75px;width:10.4px;height:10.8px;background:#212121;"></div>
<div class="a" style="left:479.4px;top:391.75px;width:10.4px;height:10.8px;background:#212121;"></div>
<div class="a" style="left:491.7px;top:391.75px;width:10.7px;height:10.8px;background:#212121;"></div>
<svg style="left:2px;top:393.65px" width="9.8" height="6.2" viewBox="0 0 9.8 6.2"><path d="M0 3.3 Q4.9 -2.6 9.8 3.3 Q4.9 9.2 0 3.3Z" fill="#d9d9d9"/><circle cx="4.9" cy="3.3" r="1.6" fill="#2a2a2a"/><circle cx="5.5" cy="2.7" r=".5" fill="#d9d9d9"/></svg>
<svg style="left:59.3px;top:394.05px" width="4" height="7.2" viewBox="0 0 4 7.2"><path d="M0.6 0.5 L3.3 3.6 L0.6 6.7" fill="none" stroke="#9a9a9a" stroke-width="1.4"/></svg>
<div class="a" style="left:69px;top:391.85px;width:10.3px;height:10.2px;background:#e8d84b;"></div>
<div class="t" style="left:87.2px;top:390.05px;font-size:9.6px;color:#d8d8d8;transform:scaleX(0.950);">16</div>
<svg style="left:113.2px;top:391.65px" width="8.8" height="10.4" viewBox="0 0 8.8 10.4"><rect x="0.4" y="0.4" width="8" height="9.6" fill="#3a1a07" stroke="#633414" stroke-width=".8"/><path d="M3 7.6 L4.1 2.4 L5 2.4 L6.2 7.6 L5.2 7.6 L4.6 4.6 L4 7.6Z" fill="#d8742a"/><ellipse cx="4.5" cy="7.6" rx="1" ry="1" fill="#f3c7a2"/></svg>
<div class="t" style="left:128.2px;top:391.05px;font-size:9.5px;color:#dedede;transform:scaleX(1.037);-webkit-text-stroke:.2px;">[Leaf_3.ai]</div>
<svg style="left:404.2px;top:391.85px" width="10.4" height="9.4" viewBox="0 0 10.4 9.4"><path d="M1.2 6.9 V4.2 Q1.2 0.3 5.2 0.3 Q9.2 0.3 9.2 4.2 V6.9Z" fill="#cfcfcf"/><rect x="0" y="6.6" width="10.4" height="1" fill="#cfcfcf"/><rect x="2.9" y="3.4" width="1.3" height="3.1" fill="#212121"/><rect x="6.2" y="3.4" width="1.3" height="3.1" fill="#212121"/><rect x="4.4" y="4" width="1.6" height="5.2" rx=".7" fill="#e6e6e6"/></svg>
<svg style="left:417.3px;top:392.45px" width="8.6" height="8.6" viewBox="0 0 8.6 8.6"><path d="M4.3 0 V8.6 M0 4.3 H8.6" stroke="#d0d0d0" stroke-width="1.2"/><path d="M1.7 1.7 L6.9 6.9 M6.9 1.7 L1.7 6.9" stroke="#d0d0d0" stroke-width="1.2"/><circle cx="4.3" cy="4.3" r="2.5" fill="#d0d0d0"/><circle cx="4.3" cy="4.3" r="1" fill="#222"/></svg>
<svg style="left:429.7px;top:392.15px" width="9.4" height="9.2" viewBox="0 0 9.4 9.2"><path d="M0.8 8.6 L8.8 0.6" stroke="#cfcfcf" stroke-width="1.4" stroke-linecap="round"/></svg>
<svg style="left:518.6px;top:391.65px" width="10.4" height="10.4" viewBox="0 0 10 10"><path d="M5.3 5.9 Q4 5.2 4.6 3.9 Q5.8 2.8 7 4 Q8 5.8 6.4 7.3 Q4.2 8.5 2.6 6.6 Q1.2 4.2 3 2.2 Q5.4 0.4 7.8 2 Q9.2 3.4 9 5.4" fill="none" stroke="#bcbcbc" stroke-width="1.25" stroke-linecap="round"/></svg>
<div class="a" style="left:535.2px;top:391.85px;width:74.2px;height:10.6px;background:#1b1b1b;"></div>
<div class="t" style="left:540.8px;top:390.95px;font-size:9px;color:#dedede;transform:scaleX(0.985);-webkit-text-stroke:.2px;">13. Leaf_Cont</div>
<svg style="left:599px;top:395.35px" width="6.5" height="4" viewBox="0 0 6.5 4"><path d="M0.5 0.5 L3.25 3.3 L6 0.5" fill="none" stroke="#c8c8c8" stroke-width="1.1"/></svg>
<div class="a" style="left:636.8px;top:390.25px;width:83.2px;height:14.25px;background:#a19c4f;border-bottom:1.2px solid rgba(0,0,0,.6)"></div>
<div class="a" style="left:26.7px;top:406px;width:10.3px;height:10.8px;background:#212121;"></div>
<div class="a" style="left:39px;top:406px;width:10.3px;height:10.8px;background:#212121;"></div>
<div class="a" style="left:403.8px;top:406px;width:11.4px;height:10.8px;background:#212121;"></div>
<div class="a" style="left:416.8px;top:406px;width:9.9px;height:10.8px;background:#212121;"></div>
<div class="a" style="left:428.4px;top:406px;width:11.3px;height:10.8px;background:#212121;"></div>
<div class="a" style="left:441.4px;top:406px;width:10.6px;height:10.8px;background:#212121;"></div>
<div class="a" style="left:466.7px;top:406px;width:10.4px;height:10.8px;background:#212121;"></div>
<div class="a" style="left:479.4px;top:406px;width:10.4px;height:10.8px;background:#212121;"></div>
<div class="a" style="left:491.7px;top:406px;width:10.7px;height:10.8px;background:#212121;"></div>
<svg style="left:2px;top:407.9px" width="9.8" height="6.2" viewBox="0 0 9.8 6.2"><path d="M0 3.3 Q4.9 -2.6 9.8 3.3 Q4.9 9.2 0 3.3Z" fill="#d9d9d9"/><circle cx="4.9" cy="3.3" r="1.6" fill="#2a2a2a"/><circle cx="5.5" cy="2.7" r=".5" fill="#d9d9d9"/></svg>
<svg style="left:59.3px;top:408.3px" width="4" height="7.2" viewBox="0 0 4 7.2"><path d="M0.6 0.5 L3.3 3.6 L0.6 6.7" fill="none" stroke="#9a9a9a" stroke-width="1.4"/></svg>
<div class="a" style="left:69px;top:406.1px;width:10.3px;height:10.2px;background:#e8d84b;"></div>
<div class="t" style="left:87.2px;top:404.3px;font-size:9.6px;color:#d8d8d8;transform:scaleX(0.950);">17</div>
<svg style="left:113.2px;top:405.9px" width="8.8" height="10.4" viewBox="0 0 8.8 10.4"><rect x="0.4" y="0.4" width="8" height="9.6" fill="#3a1a07" stroke="#633414" stroke-width=".8"/><path d="M3 7.6 L4.1 2.4 L5 2.4 L6.2 7.6 L5.2 7.6 L4.6 4.6 L4 7.6Z" fill="#d8742a"/><ellipse cx="4.5" cy="7.6" rx="1" ry="1" fill="#f3c7a2"/></svg>
<div class="t" style="left:128.2px;top:405.3px;font-size:9.5px;color:#dedede;transform:scaleX(1.037);-webkit-text-stroke:.2px;">[Leaf_4.ai]</div>
<svg style="left:404.2px;top:406.1px" width="10.4" height="9.4" viewBox="0 0 10.4 9.4"><path d="M1.2 6.9 V4.2 Q1.2 0.3 5.2 0.3 Q9.2 0.3 9.2 4.2 V6.9Z" fill="#cfcfcf"/><rect x="0" y="6.6" width="10.4" height="1" fill="#cfcfcf"/><rect x="2.9" y="3.4" width="1.3" height="3.1" fill="#212121"/><rect x="6.2" y="3.4" width="1.3" height="3.1" fill="#212121"/><rect x="4.4" y="4" width="1.6" height="5.2" rx=".7" fill="#e6e6e6"/></svg>
<svg style="left:429.7px;top:406.4px" width="9.4" height="9.2" viewBox="0 0 9.4 9.2"><path d="M0.8 8.6 L8.8 0.6" stroke="#cfcfcf" stroke-width="1.4" stroke-linecap="round"/></svg>
<svg style="left:518.6px;top:405.9px" width="10.4" height="10.4" viewBox="0 0 10 10"><path d="M5.3 5.9 Q4 5.2 4.6 3.9 Q5.8 2.8 7 4 Q8 5.8 6.4 7.3 Q4.2 8.5 2.6 6.6 Q1.2 4.2 3 2.2 Q5.4 0.4 7.8 2 Q9.2 3.4 9 5.4" fill="none" stroke="#bcbcbc" stroke-width="1.25" stroke-linecap="round"/></svg>
<div class="a" style="left:535.2px;top:406.1px;width:74.2px;height:10.6px;background:#1b1b1b;"></div>
<div class="t" style="left:540.8px;top:405.2px;font-size:9px;color:#dedede;transform:scaleX(0.985);-webkit-text-stroke:.2px;">13. Leaf_Cont</div>
<svg style="left:599px;top:409.6px" width="6.5" height="4" viewBox="0 0 6.5 4"><path d="M0.5 0.5 L3.25 3.3 L6 0.5" fill="none" stroke="#c8c8c8" stroke-width="1.1"/></svg>
<div class="a" style="left:635px;top:404.5px;width:85px;height:14.25px;background:#a19c4f;border-bottom:1.2px solid rgba(0,0,0,.6)"></div>
<div class="a" style="left:26.7px;top:420.25px;width:10.3px;height:10.8px;background:#212121;"></div>
<div class="a" style="left:39px;top:420.25px;width:10.3px;height:10.8px;background:#212121;"></div>
<div class="a" style="left:403.8px;top:420.25px;width:11.4px;height:10.8px;background:#212121;"></div>
<div class="a" style="left:416.8px;top:420.25px;width:9.9px;height:10.8px;background:#212121;"></div>
<div class="a" style="left:428.4px;top:420.25px;width:11.3px;height:10.8px;background:#212121;"></div>
<div class="a" style="left:441.4px;top:420.25px;width:10.6px;height:10.8px;background:#212121;"></div>
<div class="a" style="left:466.7px;top:420.25px;width:10.4px;height:10.8px;background:#212121;"></div>
<div class="a" style="left:479.4px;top:420.25px;width:10.4px;height:10.8px;background:#212121;"></div>
<div class="a" style="left:491.7px;top:420.25px;width:10.7px;height:10.8px;background:#212121;"></div>
<svg style="left:2px;top:422.15px" width="9.8" height="6.2" viewBox="0 0 9.8 6.2"><path d="M0 3.3 Q4.9 -2.6 9.8 3.3 Q4.9 9.2 0 3.3Z" fill="#d9d9d9"/><circle cx="4.9" cy="3.3" r="1.6" fill="#2a2a2a"/><circle cx="5.5" cy="2.7" r=".5" fill="#d9d9d9"/></svg>
<svg style="left:59.3px;top:422.55px" width="4" height="7.2" viewBox="0 0 4 7.2"><path d="M0.6 0.5 L3.3 3.6 L0.6 6.7" fill="none" stroke="#9a9a9a" stroke-width="1.4"/></svg>
<div class="a" style="left:69px;top:420.35px;width:10.3px;height:10.2px;background:#e8d84b;"></div>
<div class="t" style="left:87.2px;top:418.55px;font-size:9.6px;color:#d8d8d8;transform:scaleX(0.950);">18</div>
<svg style="left:113.2px;top:420.15px" width="8.8" height="10.4" viewBox="0 0 8.8 10.4"><rect x="0.4" y="0.4" width="8" height="9.6" fill="#3a1a07" stroke="#633414" stroke-width=".8"/><path d="M3 7.6 L4.1 2.4 L5 2.4 L6.2 7.6 L5.2 7.6 L4.6 4.6 L4 7.6Z" fill="#d8742a"/><ellipse cx="4.5" cy="7.6" rx="1" ry="1" fill="#f3c7a2"/></svg>
<div class="t" style="left:128.2px;top:419.55px;font-size:9.5px;color:#dedede;transform:scaleX(1.037);-webkit-text-stroke:.2px;">[Leaf_4.ai]</div>
<svg style="left:404.2px;top:420.35px" width="10.4" height="9.4" viewBox="0 0 10.4 9.4"><path d="M1.2 6.9 V4.2 Q1.2 0.3 5.2 0.3 Q9.2 0.3 9.2 4.2 V6.9Z" fill="#cfcfcf"/><rect x="0" y="6.6" width="10.4" height="1" fill="#cfcfcf"/><rect x="2.9" y="3.4" width="1.3" height="3.1" fill="#212121"/><rect x="6.2" y="3.4" width="1.3" height="3.1" fill="#212121"/><rect x="4.4" y="4" width="1.6" height="5.2" rx=".7" fill="#e6e6e6"/></svg>
<svg style="left:429.7px;top:420.65px" width="9.4" height="9.2" viewBox="0 0 9.4 9.2"><path d="M0.8 8.6 L8.8 0.6" stroke="#cfcfcf" stroke-width="1.4" stroke-linecap="round"/></svg>
<svg style="left:518.6px;top:420.15px" width="10.4" height="10.4" viewBox="0 0 10 10"><path d="M5.3 5.9 Q4 5.2 4.6 3.9 Q5.8 2.8 7 4 Q8 5.8 6.4 7.3 Q4.2 8.5 2.6 6.6 Q1.2 4.2 3 2.2 Q5.4 0.4 7.8 2 Q9.2 3.4 9 5.4" fill="none" stroke="#bcbcbc" stroke-width="1.25" stroke-linecap="round"/></svg>
<div class="a" style="left:535.2px;top:420.35px;width:74.2px;height:10.6px;background:#1b1b1b;"></div>
<div class="t" style="left:540.8px;top:419.45px;font-size:9px;color:#dedede;transform:scaleX(0.985);-webkit-text-stroke:.2px;">13. Leaf_Cont</div>
<svg style="left:599px;top:423.85px" width="6.5" height="4" viewBox="0 0 6.5 4"><path d="M0.5 0.5 L3.25 3.3 L6 0.5" fill="none" stroke="#c8c8c8" stroke-width="1.1"/></svg>
<div class="a" style="left:638.2px;top:418.75px;width:81.8px;height:14.25px;background:#a19c4f;border-bottom:1.2px solid rgba(0,0,0,.6)"></div>
<div class="a" style="left:26.7px;top:434.5px;width:10.3px;height:10.8px;background:#212121;"></div>
<div class="a" style="left:39px;top:434.5px;width:10.3px;height:10.8px;background:#212121;"></div>
<div class="a" style="left:403.8px;top:434.5px;width:11.4px;height:10.8px;background:#212121;"></div>
<div class="a" style="left:416.8px;top:434.5px;width:9.9px;height:10.8px;background:#212121;"></div>
<div class="a" style="left:428.4px;top:434.5px;width:11.3px;height:10.8px;background:#212121;"></div>
<div class="a" style="left:441.4px;top:434.5px;width:10.6px;height:10.8px;background:#212121;"></div>
<div class="a" style="left:466.7px;top:434.5px;width:10.4px;height:10.8px;background:#212121;"></div>
<div class="a" style="left:479.4px;top:434.5px;width:10.4px;height:10.8px;background:#212121;"></div>
<div class="a" style="left:491.7px;top:434.5px;width:10.7px;height:10.8px;background:#212121;"></div>
<svg style="left:2px;top:436.4px" width="9.8" height="6.2" viewBox="0 0 9.8 6.2"><path d="M0 3.3 Q4.9 -2.6 9.8 3.3 Q4.9 9.2 0 3.3Z" fill="#d9d9d9"/><circle cx="4.9" cy="3.3" r="1.6" fill="#2a2a2a"/><circle cx="5.5" cy="2.7" r=".5" fill="#d9d9d9"/></svg>
<svg style="left:59.3px;top:436.8px" width="4" height="7.2" viewBox="0 0 4 7.2"><path d="M0.6 0.5 L3.3 3.6 L0.6 6.7" fill="none" stroke="#9a9a9a" stroke-width="1.4"/></svg>
<div class="a" style="left:69px;top:434.6px;width:10.3px;height:10.2px;background:#cc3a40;"></div>
<div class="t" style="left:87.2px;top:432.8px;font-size:9.6px;color:#d8d8d8;transform:scaleX(0.950);">19</div>
<div class="a" style="left:112px;top:434.8px;width:10px;height:10.4px;background:#ffffff;"></div>
<div class="t" style="left:128.2px;top:433.8px;font-size:9.5px;color:#dedede;transform:scaleX(1.037);-webkit-text-stroke:.2px;">Leaf_Cont_1</div>
<svg style="left:404.2px;top:434.6px" width="10.4" height="9.4" viewBox="0 0 10.4 9.4"><path d="M1.2 6.9 V4.2 Q1.2 0.3 5.2 0.3 Q9.2 0.3 9.2 4.2 V6.9Z" fill="#cfcfcf"/><rect x="0" y="6.6" width="10.4" height="1" fill="#cfcfcf"/><rect x="2.9" y="3.4" width="1.3" height="3.1" fill="#212121"/><rect x="6.2" y="3.4" width="1.3" height="3.1" fill="#212121"/><rect x="4.4" y="4" width="1.6" height="5.2" rx=".7" fill="#e6e6e6"/></svg>
<svg style="left:429.7px;top:434.9px" width="9.4" height="9.2" viewBox="0 0 9.4 9.2"><path d="M0.8 8.6 L8.8 0.6" stroke="#cfcfcf" stroke-width="1.4" stroke-linecap="round"/></svg>
<div class="t" style="left:442px;top:432.2px;font-size:10.5px;color:#bdbdbd;transform:scaleX(1.078);font-style:italic;">fx</div>
<svg style="left:518.6px;top:434.4px" width="10.4" height="10.4" viewBox="0 0 10 10"><path d="M5.3 5.9 Q4 5.2 4.6 3.9 Q5.8 2.8 7 4 Q8 5.8 6.4 7.3 Q4.2 8.5 2.6 6.6 Q1.2 4.2 3 2.2 Q5.4 0.4 7.8 2 Q9.2 3.4 9 5.4" fill="none" stroke="#bcbcbc" stroke-width="1.25" stroke-linecap="round"/></svg>
<div class="a" style="left:535.2px;top:434.6px;width:74.2px;height:10.6px;background:#1b1b1b;"></div>
<div class="t" style="left:540.8px;top:433.7px;font-size:9px;color:#dedede;transform:scaleX(0.985);-webkit-text-stroke:.2px;">None</div>
<svg style="left:599px;top:438.1px" width="6.5" height="4" viewBox="0 0 6.5 4"><path d="M0.5 0.5 L3.25 3.3 L6 0.5" fill="none" stroke="#c8c8c8" stroke-width="1.1"/></svg>
<div class="a" style="left:633px;top:433px;width:87px;height:14.25px;background:#7d3a3f;border-bottom:1.2px solid rgba(0,0,0,.6)"></div>
<div class="a" style="left:26.7px;top:448.75px;width:10.3px;height:10.8px;background:#212121;"></div>
<div class="a" style="left:39px;top:448.75px;width:10.3px;height:10.8px;background:#212121;"></div>
<div class="a" style="left:403.8px;top:448.75px;width:11.4px;height:10.8px;background:#212121;"></div>
<div class="a" style="left:416.8px;top:448.75px;width:9.9px;height:10.8px;background:#212121;"></div>
<div class="a" style="left:428.4px;top:448.75px;width:11.3px;height:10.8px;background:#212121;"></div>
<div class="a" style="left:441.4px;top:448.75px;width:10.6px;height:10.8px;background:#212121;"></div>
<div class="a" style="left:466.7px;top:448.75px;width:10.4px;height:10.8px;background:#212121;"></div>
<div class="a" style="left:479.4px;top:448.75px;width:10.4px;height:10.8px;background:#212121;"></div>
<div class="a" style="left:491.7px;top:448.75px;width:10.7px;height:10.8px;background:#212121;"></div>
<svg style="left:2px;top:450.65px" width="9.8" height="6.2" viewBox="0 0 9.8 6.2"><path d="M0 3.3 Q4.9 -2.6 9.8 3.3 Q4.9 9.2 0 3.3Z" fill="#d9d9d9"/><circle cx="4.9" cy="3.3" r="1.6" fill="#2a2a2a"/><circle cx="5.5" cy="2.7" r=".5" fill="#d9d9d9"/></svg>
<svg style="left:59.3px;top:451.05px" width="4" height="7.2" viewBox="0 0 4 7.2"><path d="M0.6 0.5 L3.3 3.6 L0.6 6.7" fill="none" stroke="#9a9a9a" stroke-width="1.4"/></svg>
<div class="a" style="left:69px;top:448.85px;width:10.3px;height:10.2px;background:#cc3a40;"></div>
<div class="t" style="left:87.2px;top:447.05px;font-size:9.6px;color:#d8d8d8;transform:scaleX(0.950);">20</div>
<svg style="left:113.2px;top:448.65px" width="8.8" height="10.4" viewBox="0 0 8.8 10.4"><rect x="0.4" y="0.4" width="8" height="9.6" fill="#3a1a07" stroke="#633414" stroke-width=".8"/><path d="M3 7.6 L4.1 2.4 L5 2.4 L6.2 7.6 L5.2 7.6 L4.6 4.6 L4 7.6Z" fill="#d8742a"/><ellipse cx="4.5" cy="7.6" rx="1" ry="1" fill="#f3c7a2"/></svg>
<div class="t" style="left:128.2px;top:448.05px;font-size:9.5px;color:#dedede;transform:scaleX(1.037);-webkit-text-stroke:.2px;">[Leaf_1.ai]</div>
<svg style="left:404.2px;top:448.85px" width="10.4" height="9.4" viewBox="0 0 10.4 9.4"><path d="M1.2 6.9 V4.2 Q1.2 0.3 5.2 0.3 Q9.2 0.3 9.2 4.2 V6.9Z" fill="#cfcfcf"/><rect x="0" y="6.6" width="10.4" height="1" fill="#cfcfcf"/><rect x="2.9" y="3.4" width="1.3" height="3.1" fill="#212121"/><rect x="6.2" y="3.4" width="1.3" height="3.1" fill="#212121"/><rect x="4.4" y="4" width="1.6" height="5.2" rx=".7" fill="#e6e6e6"/></svg>
<svg style="left:417.3px;top:449.45px" width="8.6" height="8.6" viewBox="0 0 8.6 8.6"><path d="M4.3 0 V8.6 M0 4.3 H8.6" stroke="#d0d0d0" stroke-width="1.2"/><path d="M1.7 1.7 L6.9 6.9 M6.9 1.7 L1.7 6.9" stroke="#d0d0d0" stroke-width="1.2"/><circle cx="4.3" cy="4.3" r="2.5" fill="#d0d0d0"/><circle cx="4.3" cy="4.3" r="1" fill="#222"/></svg>
<svg style="left:429.7px;top:449.15px" width="9.4" height="9.2" viewBox="0 0 9.4 9.2"><path d="M0.8 8.6 L8.8 0.6" stroke="#cfcfcf" stroke-width="1.4" stroke-linecap="round"/></svg>
<svg style="left:518.6px;top:448.65px" width="10.4" height="10.4" viewBox="0 0 10 10"><path d="M5.3 5.9 Q4 5.2 4.6 3.9 Q5.8 2.8 7 4 Q8 5.8 6.4 7.3 Q4.2 8.5 2.6 6.6 Q1.2 4.2 3 2.2 Q5.4 0.4 7.8 2 Q9.2 3.4 9 5.4" fill="none" stroke="#bcbcbc" stroke-width="1.25" stroke-linecap="round"/></svg>
<div class="a" style="left:535.2px;top:448.85px;width:74.2px;height:10.6px;background:#1b1b1b;"></div>
<div class="t" style="left:540.8px;top:447.95px;font-size:9px;color:#dedede;transform:scaleX(0.985);-webkit-text-stroke:.2px;">19. Leaf_Cont</div>
<svg style="left:599px;top:452.35px" width="6.5" height="4" viewBox="0 0 6.5 4"><path d="M0.5 0.5 L3.25 3.3 L6 0.5" fill="none" stroke="#c8c8c8" stroke-width="1.1"/></svg>
<div class="a" style="left:637.8px;top:447.25px;width:82.2px;height:14.25px;background:#7d3a3f;border-bottom:1.2px solid rgba(0,0,0,.6)"></div>
<div class="a" style="left:26.7px;top:463px;width:10.3px;height:10.8px;background:#212121;"></div>
<div class="a" style="left:39px;top:463px;width:10.3px;height:10.8px;background:#212121;"></div>
<div class="a" style="left:403.8px;top:463px;width:11.4px;height:10.8px;background:#212121;"></div>
<div class="a" style="left:416.8px;top:463px;width:9.9px;height:10.8px;background:#212121;"></div>
<div class="a" style="left:428.4px;top:463px;width:11.3px;height:10.8px;background:#212121;"></div>
<div class="a" style="left:441.4px;top:463px;width:10.6px;height:10.8px;background:#212121;"></div>
<div class="a" style="left:466.7px;top:463px;width:10.4px;height:10.8px;background:#212121;"></div>
<div class="a" style="left:479.4px;top:463px;width:10.4px;height:10.8px;background:#212121;"></div>
<div class="a" style="left:491.7px;top:463px;width:10.7px;height:10.8px;background:#212121;"></div>
<svg style="left:2px;top:464.9px" width="9.8" height="6.2" viewBox="0 0 9.8 6.2"><path d="M0 3.3 Q4.9 -2.6 9.8 3.3 Q4.9 9.2 0 3.3Z" fill="#d9d9d9"/><circle cx="4.9" cy="3.3" r="1.6" fill="#2a2a2a"/><circle cx="5.5" cy="2.7" r=".5" fill="#d9d9d9"/></svg>
<svg style="left:59.3px;top:465.3px" width="4" height="7.2" viewBox="0 0 4 7.2"><path d="M0.6 0.5 L3.3 3.6 L0.6 6.7" fill="none" stroke="#9a9a9a" stroke-width="1.4"/></svg>
<div class="a" style="left:69px;top:463.1px;width:10.3px;height:10.2px;background:#cc3a40;"></div>
<div class="t" style="left:87.2px;top:461.3px;font-size:9.6px;color:#d8d8d8;transform:scaleX(0.950);">21</div>
<svg style="left:113.2px;top:462.9px" width="8.8" height="10.4" viewBox="0 0 8.8 10.4"><rect x="0.4" y="0.4" width="8" height="9.6" fill="#3a1a07" stroke="#633414" stroke-width=".8"/><path d="M3 7.6 L4.1 2.4 L5 2.4 L6.2 7.6 L5.2 7.6 L4.6 4.6 L4 7.6Z" fill="#d8742a"/><ellipse cx="4.5" cy="7.6" rx="1" ry="1" fill="#f3c7a2"/></svg>
<div class="t" style="left:128.2px;top:462.3px;font-size:9.5px;color:#dedede;transform:scaleX(1.037);-webkit-text-stroke:.2px;">[Leaf_2.ai]</div>
<svg style="left:404.2px;top:463.1px" width="10.4" height="9.4" viewBox="0 0 10.4 9.4"><path d="M1.2 6.9 V4.2 Q1.2 0.3 5.2 0.3 Q9.2 0.3 9.2 4.2 V6.9Z" fill="#cfcfcf"/><rect x="0" y="6.6" width="10.4" height="1" fill="#cfcfcf"/><rect x="2.9" y="3.4" width="1.3" height="3.1" fill="#212121"/><rect x="6.2" y="3.4" width="1.3" height="3.1" fill="#212121"/><rect x="4.4" y="4" width="1.6" height="5.2" rx=".7" fill="#e6e6e6"/></svg>
<svg style="left:417.3px;top:463.7px" width="8.6" height="8.6" viewBox="0 0 8.6 8.6"><path d="M4.3 0 V8.6 M0 4.3 H8.6" stroke="#d0d0d0" stroke-width="1.2"/><path d="M1.7 1.7 L6.9 6.9 M6.9 1.7 L1.7 6.9" stroke="#d0d0d0" stroke-width="1.2"/><circle cx="4.3" cy="4.3" r="2.5" fill="#d0d0d0"/><circle cx="4.3" cy="4.3" r="1" fill="#222"/></svg>
<svg style="left:429.7px;top:463.4px" width="9.4" height="9.2" viewBox="0 0 9.4 9.2"><path d="M0.8 8.6 L8.8 0.6" stroke="#cfcfcf" stroke-width="1.4" stroke-linecap="round"/></svg>
<svg style="left:518.6px;top:462.9px" width="10.4" height="10.4" viewBox="0 0 10 10"><path d="M5.3 5.9 Q4 5.2 4.6 3.9 Q5.8 2.8 7 4 Q8 5.8 6.4 7.3 Q4.2 8.5 2.6 6.6 Q1.2 4.2 3 2.2 Q5.4 0.4 7.8 2 Q9.2 3.4 9 5.4" fill="none" stroke="#bcbcbc" stroke-width="1.25" stroke-linecap="round"/></svg>
<div class="a" style="left:535.2px;top:463.1px;width:74.2px;height:10.6px;background:#1b1b1b;"></div>
<div class="t" style="left:540.8px;top:462.2px;font-size:9px;color:#dedede;transform:scaleX(0.985);-webkit-text-stroke:.2px;">19. Leaf_Cont</div>
<svg style="left:599px;top:466.6px" width="6.5" height="4" viewBox="0 0 6.5 4"><path d="M0.5 0.5 L3.25 3.3 L6 0.5" fill="none" stroke="#c8c8c8" stroke-width="1.1"/></svg>
<div class="a" style="left:635.5px;top:461.5px;width:84.5px;height:14.25px;background:#7d3a3f;border-bottom:1.2px solid rgba(0,0,0,.6)"></div>
<div class="a" style="left:26.7px;top:477.25px;width:10.3px;height:10.8px;background:#212121;"></div>
<div class="a" style="left:39px;top:477.25px;width:10.3px;height:10.8px;background:#212121;"></div>
<div class="a" style="left:403.8px;top:477.25px;width:11.4px;height:10.8px;background:#212121;"></div>
<div class="a" style="left:416.8px;top:477.25px;width:9.9px;height:10.8px;background:#212121;"></div>
<div class="a" style="left:428.4px;top:477.25px;width:11.3px;height:10.8px;background:#212121;"></div>
<div class="a" style="left:441.4px;top:477.25px;width:10.6px;height:10.8px;background:#212121;"></div>
<div class="a" style="left:466.7px;top:477.25px;width:10.4px;height:10.8px;background:#212121;"></div>
<div class="a" style="left:479.4px;top:477.25px;width:10.4px;height:10.8px;background:#212121;"></div>
<div class="a" style="left:491.7px;top:477.25px;width:10.7px;height:10.8px;background:#212121;"></div>
<svg style="left:2px;top:479.15px" width="9.8" height="6.2" viewBox="0 0 9.8 6.2"><path d="M0 3.3 Q4.9 -2.6 9.8 3.3 Q4.9 9.2 0 3.3Z" fill="#d9d9d9"/><circle cx="4.9" cy="3.3" r="1.6" fill="#2a2a2a"/><circle cx="5.5" cy="2.7" r=".5" fill="#d9d9d9"/></svg>
<svg style="left:59.3px;top:479.55px" width="4" height="7.2" viewBox="0 0 4 7.2"><path d="M0.6 0.5 L3.3 3.6 L0.6 6.7" fill="none" stroke="#9a9a9a" stroke-width="1.4"/></svg>
<div class="a" style="left:69px;top:477.35px;width:10.3px;height:10.2px;background:#cc3a40;"></div>
<div class="t" style="left:87.2px;top:475.55px;font-size:9.6px;color:#d8d8d8;transform:scaleX(0.950);">22</div>
<svg style="left:113.2px;top:477.15px" width="8.8" height="10.4" viewBox="0 0 8.8 10.4"><rect x="0.4" y="0.4" width="8" height="9.6" fill="#3a1a07" stroke="#633414" stroke-width=".8"/><path d="M3 7.6 L4.1 2.4 L5 2.4 L6.2 7.6 L5.2 7.6 L4.6 4.6 L4 7.6Z" fill="#d8742a"/><ellipse cx="4.5" cy="7.6" rx="1" ry="1" fill="#f3c7a2"/></svg>
<div class="t" style="left:128.2px;top:476.55px;font-size:9.5px;color:#dedede;transform:scaleX(1.037);-webkit-text-stroke:.2px;">[Leaf_3.ai]</div>
<svg style="left:404.2px;top:477.35px" width="10.4" height="9.4" viewBox="0 0 10.4 9.4"><path d="M1.2 6.9 V4.2 Q1.2 0.3 5.2 0.3 Q9.2 0.3 9.2 4.2 V6.9Z" fill="#cfcfcf"/><rect x="0" y="6.6" width="10.4" height="1" fill="#cfcfcf"/><rect x="2.9" y="3.4" width="1.3" height="3.1" fill="#212121"/><rect x="6.2" y="3.4" width="1.3" height="3.1" fill="#212121"/><rect x="4.4" y="4" width="1.6" height="5.2" rx=".7" fill="#e6e6e6"/></svg>
<svg style="left:417.3px;top:477.95px" width="8.6" height="8.6" viewBox="0 0 8.6 8.6"><path d="M4.3 0 V8.6 M0 4.3 H8.6" stroke="#d0d0d0" stroke-width="1.2"/><path d="M1.7 1.7 L6.9 6.9 M6.9 1.7 L1.7 6.9" stroke="#d0d0d0" stroke-width="1.2"/><circle cx="4.3" cy="4.3" r="2.5" fill="#d0d0d0"/><circle cx="4.3" cy="4.3" r="1" fill="#222"/></svg>
<svg style="left:429.7px;top:477.65px" width="9.4" height="9.2" viewBox="0 0 9.4 9.2"><path d="M0.8 8.6 L8.8 0.6" stroke="#cfcfcf" stroke-width="1.4" stroke-linecap="round"/></svg>
<svg style="left:518.6px;top:477.15px" width="10.4" height="10.4" viewBox="0 0 10 10"><path d="M5.3 5.9 Q4 5.2 4.6 3.9 Q5.8 2.8 7 4 Q8 5.8 6.4 7.3 Q4.2 8.5 2.6 6.6 Q1.2 4.2 3 2.2 Q5.4 0.4 7.8 2 Q9.2 3.4 9 5.4" fill="none" stroke="#bcbcbc" stroke-width="1.25" stroke-linecap="round"/></svg>
<div class="a" style="left:535.2px;top:477.35px;width:74.2px;height:10.6px;background:#1b1b1b;"></div>
<div class="t" style="left:540.8px;top:476.45px;font-size:9px;color:#dedede;transform:scaleX(0.985);-webkit-text-stroke:.2px;">19. Leaf_Cont</div>
<svg style="left:599px;top:480.85px" width="6.5" height="4" viewBox="0 0 6.5 4"><path d="M0.5 0.5 L3.25 3.3 L6 0.5" fill="none" stroke="#c8c8c8" stroke-width="1.1"/></svg>
<div class="a" style="left:634.8px;top:475.75px;width:85.2px;height:14.25px;background:#7d3a3f;border-bottom:1.2px solid rgba(0,0,0,.6)"></div>
<div class="a" style="left:26.7px;top:491.5px;width:10.3px;height:10.8px;background:#212121;"></div>
<div class="a" style="left:39px;top:491.5px;width:10.3px;height:10.8px;background:#212121;"></div>
<div class="a" style="left:403.8px;top:491.5px;width:11.4px;height:10.8px;background:#212121;"></div>
<div class="a" style="left:416.8px;top:491.5px;width:9.9px;height:10.8px;background:#212121;"></div>
<div class="a" style="left:428.4px;top:491.5px;width:11.3px;height:10.8px;background:#212121;"></div>
<div class="a" style="left:441.4px;top:491.5px;width:10.6px;height:10.8px;background:#212121;"></div>
<div class="a" style="left:466.7px;top:491.5px;width:10.4px;height:10.8px;background:#212121;"></div>
<div class="a" style="left:479.4px;top:491.5px;width:10.4px;height:10.8px;background:#212121;"></div>
<div class="a" style="left:491.7px;top:491.5px;width:10.7px;height:10.8px;background:#212121;"></div>
<svg style="left:2px;top:493.4px" width="9.8" height="6.2" viewBox="0 0 9.8 6.2"><path d="M0 3.3 Q4.9 -2.6 9.8 3.3 Q4.9 9.2 0 3.3Z" fill="#d9d9d9"/><circle cx="4.9" cy="3.3" r="1.6" fill="#2a2a2a"/><circle cx="5.5" cy="2.7" r=".5" fill="#d9d9d9"/></svg>
<svg style="left:59.3px;top:493.8px" width="4" height="7.2" viewBox="0 0 4 7.2"><path d="M0.6 0.5 L3.3 3.6 L0.6 6.7" fill="none" stroke="#9a9a9a" stroke-width="1.4"/></svg>
<div class="a" style="left:69px;top:491.6px;width:10.3px;height:10.2px;background:#cc3a40;"></div>
<div class="t" style="left:87.2px;top:489.8px;font-size:9.6px;color:#d8d8d8;transform:scaleX(0.950);">23</div>
<svg style="left:113.2px;top:491.4px" width="8.8" height="10.4" viewBox="0 0 8.8 10.4"><rect x="0.4" y="0.4" width="8" height="9.6" fill="#3a1a07" stroke="#633414" stroke-width=".8"/><path d="M3 7.6 L4.1 2.4 L5 2.4 L6.2 7.6 L5.2 7.6 L4.6 4.6 L4 7.6Z" fill="#d8742a"/><ellipse cx="4.5" cy="7.6" rx="1" ry="1" fill="#f3c7a2"/></svg>
<div class="t" style="left:128.2px;top:490.8px;font-size:9.5px;color:#dedede;transform:scaleX(1.037);-webkit-text-stroke:.2px;">[Leaf_4.ai]</div>
<svg style="left:404.2px;top:491.6px" width="10.4" height="9.4" viewBox="0 0 10.4 9.4"><path d="M1.2 6.9 V4.2 Q1.2 0.3 5.2 0.3 Q9.2 0.3 9.2 4.2 V6.9Z" fill="#cfcfcf"/><rect x="0" y="6.6" width="10.4" height="1" fill="#cfcfcf"/><rect x="2.9" y="3.4" width="1.3" height="3.1" fill="#212121"/><rect x="6.2" y="3.4" width="1.3" height="3.1" fill="#212121"/><rect x="4.4" y="4" width="1.6" height="5.2" rx=".7" fill="#e6e6e6"/></svg>
<svg style="left:429.7px;top:491.9px" width="9.4" height="9.2" viewBox="0 0 9.4 9.2"><path d="M0.8 8.6 L8.8 0.6" stroke="#cfcfcf" stroke-width="1.4" stroke-linecap="round"/></svg>
<svg style="left:518.6px;top:491.4px" width="10.4" height="10.4" viewBox="0 0 10 10"><path d="M5.3 5.9 Q4 5.2 4.6 3.9 Q5.8 2.8 7 4 Q8 5.8 6.4 7.3 Q4.2 8.5 2.6 6.6 Q1.2 4.2 3 2.2 Q5.4 0.4 7.8 2 Q9.2 3.4 9 5.4" fill="none" stroke="#bcbcbc" stroke-width="1.25" stroke-linecap="round"/></svg>
<div class="a" style="left:535.2px;top:491.6px;width:74.2px;height:10.6px;background:#1b1b1b;"></div>
<div class="t" style="left:540.8px;top:490.7px;font-size:9px;color:#dedede;transform:scaleX(0.985);-webkit-text-stroke:.2px;">19. Leaf_Cont</div>
<svg style="left:599px;top:495.1px" width="6.5" height="4" viewBox="0 0 6.5 4"><path d="M0.5 0.5 L3.25 3.3 L6 0.5" fill="none" stroke="#c8c8c8" stroke-width="1.1"/></svg>
<div class="a" style="left:634.2px;top:490px;width:85.8px;height:14.25px;background:#7d3a3f;border-bottom:1.2px solid rgba(0,0,0,.6)"></div>
<div class="a" style="left:26.7px;top:505.75px;width:10.3px;height:10.8px;background:#212121;"></div>
<div class="a" style="left:39px;top:505.75px;width:10.3px;height:10.8px;background:#212121;"></div>
<div class="a" style="left:403.8px;top:505.75px;width:11.4px;height:10.8px;background:#212121;"></div>
<div class="a" style="left:416.8px;top:505.75px;width:9.9px;height:10.8px;background:#212121;"></div>
<div class="a" style="left:428.4px;top:505.75px;width:11.3px;height:10.8px;background:#212121;"></div>
<div class="a" style="left:441.4px;top:505.75px;width:10.6px;height:10.8px;background:#212121;"></div>
<div class="a" style="left:466.7px;top:505.75px;width:10.4px;height:10.8px;background:#212121;"></div>
<div class="a" style="left:479.4px;top:505.75px;width:10.4px;height:10.8px;background:#212121;"></div>
<div class="a" style="left:491.7px;top:505.75px;width:10.7px;height:10.8px;background:#212121;"></div>
<svg style="left:2px;top:507.65px" width="9.8" height="6.2" viewBox="0 0 9.8 6.2"><path d="M0 3.3 Q4.9 -2.6 9.8 3.3 Q4.9 9.2 0 3.3Z" fill="#d9d9d9"/><circle cx="4.9" cy="3.3" r="1.6" fill="#2a2a2a"/><circle cx="5.5" cy="2.7" r=".5" fill="#d9d9d9"/></svg>
<svg style="left:59.3px;top:508.05px" width="4" height="7.2" viewBox="0 0 4 7.2"><path d="M0.6 0.5 L3.3 3.6 L0.6 6.7" fill="none" stroke="#9a9a9a" stroke-width="1.4"/></svg>
<div class="a" style="left:69px;top:505.85px;width:10.3px;height:10.2px;background:#cc3a40;"></div>
<div class="t" style="left:87.2px;top:504.05px;font-size:9.6px;color:#d8d8d8;transform:scaleX(0.950);">24</div>
<svg style="left:113.2px;top:505.65px" width="8.8" height="10.4" viewBox="0 0 8.8 10.4"><rect x="0.4" y="0.4" width="8" height="9.6" fill="#3a1a07" stroke="#633414" stroke-width=".8"/><path d="M3 7.6 L4.1 2.4 L5 2.4 L6.2 7.6 L5.2 7.6 L4.6 4.6 L4 7.6Z" fill="#d8742a"/><ellipse cx="4.5" cy="7.6" rx="1" ry="1" fill="#f3c7a2"/></svg>
<div class="t" style="left:128.2px;top:505.05px;font-size:9.5px;color:#dedede;transform:scaleX(1.037);-webkit-text-stroke:.2px;">[Leaf_4.ai]</div>
<svg style="left:404.2px;top:505.85px" width="10.4" height="9.4" viewBox="0 0 10.4 9.4"><path d="M1.2 6.9 V4.2 Q1.2 0.3 5.2 0.3 Q9.2 0.3 9.2 4.2 V6.9Z" fill="#cfcfcf"/><rect x="0" y="6.6" width="10.4" height="1" fill="#cfcfcf"/><rect x="2.9" y="3.4" width="1.3" height="3.1" fill="#212121"/><rect x="6.2" y="3.4" width="1.3" height="3.1" fill="#212121"/><rect x="4.4" y="4" width="1.6" height="5.2" rx=".7" fill="#e6e6e6"/></svg>
<svg style="left:429.7px;top:506.15px" width="9.4" height="9.2" viewBox="0 0 9.4 9.2"><path d="M0.8 8.6 L8.8 0.6" stroke="#cfcfcf" stroke-width="1.4" stroke-linecap="round"/></svg>
<svg style="left:518.6px;top:505.65px" width="10.4" height="10.4" viewBox="0 0 10 10"><path d="M5.3 5.9 Q4 5.2 4.6 3.9 Q5.8 2.8 7 4 Q8 5.8 6.4 7.3 Q4.2 8.5 2.6 6.6 Q1.2 4.2 3 2.2 Q5.4 0.4 7.8 2 Q9.2 3.4 9 5.4" fill="none" stroke="#bcbcbc" stroke-width="1.25" stroke-linecap="round"/></svg>
<div class="a" style="left:535.2px;top:505.85px;width:74.2px;height:10.6px;background:#1b1b1b;"></div>
<div class="t" style="left:540.8px;top:504.95px;font-size:9px;color:#dedede;transform:scaleX(0.985);-webkit-text-stroke:.2px;">19. Leaf_Cont</div>
<svg style="left:599px;top:509.35px" width="6.5" height="4" viewBox="0 0 6.5 4"><path d="M0.5 0.5 L3.25 3.3 L6 0.5" fill="none" stroke="#c8c8c8" stroke-width="1.1"/></svg>
<div class="a" style="left:633.4px;top:504.25px;width:86.6px;height:14.25px;background:#7d3a3f;border-bottom:1.2px solid rgba(0,0,0,.6)"></div>
<div class="a" style="left:0px;top:518.8px;width:626px;height:13.4px;background:#474747;"></div>
<div class="a" style="left:124px;top:518.8px;width:154px;height:13.4px;background:#8d8d8d;"></div>
<div class="a" style="left:26.7px;top:520px;width:10.3px;height:10.8px;background:#3a3a3a;"></div>
<div class="a" style="left:39px;top:520px;width:10.3px;height:10.8px;background:#3a3a3a;"></div>
<div class="a" style="left:403.8px;top:520px;width:11.4px;height:10.8px;background:#3a3a3a;"></div>
<div class="a" style="left:416.8px;top:520px;width:9.9px;height:10.8px;background:#3a3a3a;"></div>
<div class="a" style="left:428.4px;top:520px;width:11.3px;height:10.8px;background:#3a3a3a;"></div>
<div class="a" style="left:441.4px;top:520px;width:10.6px;height:10.8px;background:#3a3a3a;"></div>
<div class="a" style="left:466.7px;top:520px;width:10.4px;height:10.8px;background:#3a3a3a;"></div>
<div class="a" style="left:479.4px;top:520px;width:10.4px;height:10.8px;background:#3a3a3a;"></div>
<div class="a" style="left:491.7px;top:520px;width:10.7px;height:10.8px;background:#3a3a3a;"></div>
<svg style="left:2px;top:521.9px" width="9.8" height="6.2" viewBox="0 0 9.8 6.2"><path d="M0 3.3 Q4.9 -2.6 9.8 3.3 Q4.9 9.2 0 3.3Z" fill="#d9d9d9"/><circle cx="4.9" cy="3.3" r="1.6" fill="#474747"/><circle cx="5.5" cy="2.7" r=".5" fill="#d9d9d9"/></svg>
<svg style="left:59.3px;top:522.3px" width="4" height="7.2" viewBox="0 0 4 7.2"><path d="M0.6 0.5 L3.3 3.6 L0.6 6.7" fill="none" stroke="#9a9a9a" stroke-width="1.4"/></svg>
<div class="a" style="left:69px;top:520.1px;width:10.3px;height:10.2px;background:#bfbde4;"></div>
<div class="t" style="left:87.2px;top:518.3px;font-size:9.6px;color:#d8d8d8;transform:scaleX(0.950);">25</div>
<svg style="left:113.2px;top:519.9px" width="8.8" height="10.4" viewBox="0 0 8.8 10.4"><rect x="0.4" y="0.4" width="8" height="9.6" fill="#3a1a07" stroke="#633414" stroke-width=".8"/><path d="M3 7.6 L4.1 2.4 L5 2.4 L6.2 7.6 L5.2 7.6 L4.6 4.6 L4 7.6Z" fill="#d8742a"/><ellipse cx="4.5" cy="7.6" rx="1" ry="1" fill="#f3c7a2"/></svg>
<div class="t" style="left:128.2px;top:519.3px;font-size:9.5px;color:#1a1a1a;transform:scaleX(1.037);-webkit-text-stroke:.2px;">Text</div>
<svg style="left:404.2px;top:520.1px" width="10.4" height="9.4" viewBox="0 0 10.4 9.4"><path d="M1.2 6.9 V4.2 Q1.2 0.3 5.2 0.3 Q9.2 0.3 9.2 4.2 V6.9Z" fill="#cfcfcf"/><rect x="0" y="6.6" width="10.4" height="1" fill="#cfcfcf"/><rect x="2.9" y="3.4" width="1.3" height="3.1" fill="#3a3a3a"/><rect x="6.2" y="3.4" width="1.3" height="3.1" fill="#3a3a3a"/><rect x="4.4" y="4" width="1.6" height="5.2" rx=".7" fill="#e6e6e6"/></svg>
<svg style="left:429.7px;top:520.4px" width="9.4" height="9.2" viewBox="0 0 9.4 9.2"><path d="M0.8 8.6 L8.8 0.6" stroke="#cfcfcf" stroke-width="1.4" stroke-linecap="round"/></svg>
<svg style="left:518.6px;top:519.9px" width="10.4" height="10.4" viewBox="0 0 10 10"><path d="M5.3 5.9 Q4 5.2 4.6 3.9 Q5.8 2.8 7 4 Q8 5.8 6.4 7.3 Q4.2 8.5 2.6 6.6 Q1.2 4.2 3 2.2 Q5.4 0.4 7.8 2 Q9.2 3.4 9 5.4" fill="none" stroke="#bcbcbc" stroke-width="1.25" stroke-linecap="round"/></svg>
<div class="a" style="left:535.2px;top:520.1px;width:74.2px;height:10.6px;background:#3d3d3d;"></div>
<div class="t" style="left:540.8px;top:519.2px;font-size:9px;color:#dedede;transform:scaleX(0.985);-webkit-text-stroke:.2px;">None</div>
<svg style="left:599px;top:523.6px" width="6.5" height="4" viewBox="0 0 6.5 4"><path d="M0.5 0.5 L3.25 3.3 L6 0.5" fill="none" stroke="#c8c8c8" stroke-width="1.1"/></svg>
<div class="a" style="left:610px;top:518.8px;width:16px;height:13.4px;background:#4c4c4c;"></div>
<div class="a" style="left:633px;top:518.5px;width:87px;height:14.25px;background:#a6a6cd;border-bottom:1.2px solid rgba(0,0,0,.6)"></div>
<div class="a" style="left:633px;top:518.5px;width:1px;height:13px;background:#ffffff;"></div>
<div class="a" style="left:26.7px;top:534.25px;width:10.3px;height:10.8px;background:#212121;"></div>
<div class="a" style="left:39px;top:534.25px;width:10.3px;height:10.8px;background:#212121;"></div>
<div class="a" style="left:403.8px;top:534.25px;width:11.4px;height:10.8px;background:#212121;"></div>
<div class="a" style="left:416.8px;top:534.25px;width:9.9px;height:10.8px;background:#212121;"></div>
<div class="a" style="left:428.4px;top:534.25px;width:11.3px;height:10.8px;background:#212121;"></div>
<div class="a" style="left:441.4px;top:534.25px;width:10.6px;height:10.8px;background:#212121;"></div>
<div class="a" style="left:466.7px;top:534.25px;width:10.4px;height:10.8px;background:#212121;"></div>
<div class="a" style="left:479.4px;top:534.25px;width:10.4px;height:10.8px;background:#212121;"></div>
<div class="a" style="left:491.7px;top:534.25px;width:10.7px;height:10.8px;background:#212121;"></div>
<svg style="left:2px;top:536.15px" width="9.8" height="6.2" viewBox="0 0 9.8 6.2"><path d="M0 3.3 Q4.9 -2.6 9.8 3.3 Q4.9 9.2 0 3.3Z" fill="#d9d9d9"/><circle cx="4.9" cy="3.3" r="1.6" fill="#2a2a2a"/><circle cx="5.5" cy="2.7" r=".5" fill="#d9d9d9"/></svg>
<svg style="left:59.3px;top:536.55px" width="4" height="7.2" viewBox="0 0 4 7.2"><path d="M0.6 0.5 L3.3 3.6 L0.6 6.7" fill="none" stroke="#9a9a9a" stroke-width="1.4"/></svg>
<div class="a" style="left:69px;top:534.35px;width:10.3px;height:10.2px;background:#bfbde4;"></div>
<div class="t" style="left:87.2px;top:532.55px;font-size:9.6px;color:#d8d8d8;transform:scaleX(0.950);">26</div>
<svg style="left:113.2px;top:534.15px" width="8.8" height="10.4" viewBox="0 0 8.8 10.4"><rect x="0.4" y="0.4" width="8" height="9.6" fill="#3a1a07" stroke="#633414" stroke-width=".8"/><path d="M3 7.6 L4.1 2.4 L5 2.4 L6.2 7.6 L5.2 7.6 L4.6 4.6 L4 7.6Z" fill="#d8742a"/><ellipse cx="4.5" cy="7.6" rx="1" ry="1" fill="#f3c7a2"/></svg>
<div class="t" style="left:128.2px;top:533.55px;font-size:9.5px;color:#dedede;transform:scaleX(1.037);-webkit-text-stroke:.2px;">Line_1</div>
<svg style="left:404.2px;top:534.35px" width="10.4" height="9.4" viewBox="0 0 10.4 9.4"><path d="M1.2 6.9 V4.2 Q1.2 0.3 5.2 0.3 Q9.2 0.3 9.2 4.2 V6.9Z" fill="#cfcfcf"/><rect x="0" y="6.6" width="10.4" height="1" fill="#cfcfcf"/><rect x="2.9" y="3.4" width="1.3" height="3.1" fill="#212121"/><rect x="6.2" y="3.4" width="1.3" height="3.1" fill="#212121"/><rect x="4.4" y="4" width="1.6" height="5.2" rx=".7" fill="#e6e6e6"/></svg>
<svg style="left:429.7px;top:534.65px" width="9.4" height="9.2" viewBox="0 0 9.4 9.2"><path d="M0.8 8.6 L8.8 0.6" stroke="#cfcfcf" stroke-width="1.4" stroke-linecap="round"/></svg>
<svg style="left:518.6px;top:534.15px" width="10.4" height="10.4" viewBox="0 0 10 10"><path d="M5.3 5.9 Q4 5.2 4.6 3.9 Q5.8 2.8 7 4 Q8 5.8 6.4 7.3 Q4.2 8.5 2.6 6.6 Q1.2 4.2 3 2.2 Q5.4 0.4 7.8 2 Q9.2 3.4 9 5.4" fill="none" stroke="#bcbcbc" stroke-width="1.25" stroke-linecap="round"/></svg>
<div class="a" style="left:535.2px;top:534.35px;width:74.2px;height:10.6px;background:#1b1b1b;"></div>
<div class="t" style="left:540.8px;top:533.45px;font-size:9px;color:#dedede;transform:scaleX(0.985);-webkit-text-stroke:.2px;">None</div>
<svg style="left:599px;top:537.85px" width="6.5" height="4" viewBox="0 0 6.5 4"><path d="M0.5 0.5 L3.25 3.3 L6 0.5" fill="none" stroke="#c8c8c8" stroke-width="1.1"/></svg>
<div class="a" style="left:282px;top:534.35px;width:48px;height:10.6px;background:#1b1b1b;"></div>
<div class="t" style="left:288px;top:533.45px;font-size:9px;color:#dedede;transform:scaleX(0.985);-webkit-text-stroke:.2px;">Norma</div>
<svg style="left:320px;top:537.85px" width="6.5" height="4" viewBox="0 0 6.5 4"><path d="M0.5 0.5 L3.25 3.3 L6 0.5" fill="none" stroke="#c8c8c8" stroke-width="1.1"/></svg>
<div class="a" style="left:334.5px;top:534.25px;width:10.5px;height:10.8px;background:#212121;"></div>
<div class="a" style="left:351px;top:534.35px;width:44px;height:10.6px;background:#1b1b1b;"></div>
<div class="t" style="left:357px;top:533.45px;font-size:9px;color:#dedede;transform:scaleX(0.985);-webkit-text-stroke:.2px;">None</div>
<svg style="left:385px;top:537.85px" width="6.5" height="4" viewBox="0 0 6.5 4"><path d="M0.5 0.5 L3.25 3.3 L6 0.5" fill="none" stroke="#c8c8c8" stroke-width="1.1"/></svg>
<div class="a" style="left:633px;top:532.75px;width:87px;height:14.25px;background:#80809a;border-bottom:1.2px solid rgba(0,0,0,.6)"></div>
<div class="a" style="left:26.7px;top:548.5px;width:10.3px;height:10.8px;background:#212121;"></div>
<div class="a" style="left:39px;top:548.5px;width:10.3px;height:10.8px;background:#212121;"></div>
<div class="a" style="left:403.8px;top:548.5px;width:11.4px;height:10.8px;background:#212121;"></div>
<div class="a" style="left:416.8px;top:548.5px;width:9.9px;height:10.8px;background:#212121;"></div>
<div class="a" style="left:428.4px;top:548.5px;width:11.3px;height:10.8px;background:#212121;"></div>
<div class="a" style="left:441.4px;top:548.5px;width:10.6px;height:10.8px;background:#212121;"></div>
<div class="a" style="left:466.7px;top:548.5px;width:10.4px;height:10.8px;background:#212121;"></div>
<div class="a" style="left:479.4px;top:548.5px;width:10.4px;height:10.8px;background:#212121;"></div>
<div class="a" style="left:491.7px;top:548.5px;width:10.7px;height:10.8px;background:#212121;"></div>
<svg style="left:2px;top:550.4px" width="9.8" height="6.2" viewBox="0 0 9.8 6.2"><path d="M0 3.3 Q4.9 -2.6 9.8 3.3 Q4.9 9.2 0 3.3Z" fill="#d9d9d9"/><circle cx="4.9" cy="3.3" r="1.6" fill="#2a2a2a"/><circle cx="5.5" cy="2.7" r=".5" fill="#d9d9d9"/></svg>
<svg style="left:59.3px;top:550.8px" width="4" height="7.2" viewBox="0 0 4 7.2"><path d="M0.6 0.5 L3.3 3.6 L0.6 6.7" fill="none" stroke="#9a9a9a" stroke-width="1.4"/></svg>
<div class="a" style="left:69px;top:548.6px;width:10.3px;height:10.2px;background:#bfbde4;"></div>
<div class="t" style="left:87.2px;top:546.8px;font-size:9.6px;color:#d8d8d8;transform:scaleX(0.950);">27</div>
<svg style="left:113.2px;top:548.4px" width="8.8" height="10.4" viewBox="0 0 8.8 10.4"><rect x="0.4" y="0.4" width="8" height="9.6" fill="#3a1a07" stroke="#633414" stroke-width=".8"/><path d="M3 7.6 L4.1 2.4 L5 2.4 L6.2 7.6 L5.2 7.6 L4.6 4.6 L4 7.6Z" fill="#d8742a"/><ellipse cx="4.5" cy="7.6" rx="1" ry="1" fill="#f3c7a2"/></svg>
<div class="t" style="left:128.2px;top:547.8px;font-size:9.5px;color:#dedede;transform:scaleX(1.037);-webkit-text-stroke:.2px;">Line_2</div>
<svg style="left:404.2px;top:548.6px" width="10.4" height="9.4" viewBox="0 0 10.4 9.4"><path d="M1.2 6.9 V4.2 Q1.2 0.3 5.2 0.3 Q9.2 0.3 9.2 4.2 V6.9Z" fill="#cfcfcf"/><rect x="0" y="6.6" width="10.4" height="1" fill="#cfcfcf"/><rect x="2.9" y="3.4" width="1.3" height="3.1" fill="#212121"/><rect x="6.2" y="3.4" width="1.3" height="3.1" fill="#212121"/><rect x="4.4" y="4" width="1.6" height="5.2" rx=".7" fill="#e6e6e6"/></svg>
<svg style="left:429.7px;top:548.9px" width="9.4" height="9.2" viewBox="0 0 9.4 9.2"><path d="M0.8 8.6 L8.8 0.6" stroke="#cfcfcf" stroke-width="1.4" stroke-linecap="round"/></svg>
<svg style="left:518.6px;top:548.4px" width="10.4" height="10.4" viewBox="0 0 10 10"><path d="M5.3 5.9 Q4 5.2 4.6 3.9 Q5.8 2.8 7 4 Q8 5.8 6.4 7.3 Q4.2 8.5 2.6 6.6 Q1.2 4.2 3 2.2 Q5.4 0.4 7.8 2 Q9.2 3.4 9 5.4" fill="none" stroke="#bcbcbc" stroke-width="1.25" stroke-linecap="round"/></svg>
<div class="a" style="left:535.2px;top:548.6px;width:74.2px;height:10.6px;background:#1b1b1b;"></div>
<div class="t" style="left:540.8px;top:547.7px;font-size:9px;color:#dedede;transform:scaleX(0.985);-webkit-text-stroke:.2px;">None</div>
<svg style="left:599px;top:552.1px" width="6.5" height="4" viewBox="0 0 6.5 4"><path d="M0.5 0.5 L3.25 3.3 L6 0.5" fill="none" stroke="#c8c8c8" stroke-width="1.1"/></svg>
<div class="a" style="left:282px;top:548.6px;width:48px;height:10.6px;background:#1b1b1b;"></div>
<div class="t" style="left:288px;top:547.7px;font-size:9px;color:#dedede;transform:scaleX(0.985);-webkit-text-stroke:.2px;">Norma</div>
<svg style="left:320px;top:552.1px" width="6.5" height="4" viewBox="0 0 6.5 4"><path d="M0.5 0.5 L3.25 3.3 L6 0.5" fill="none" stroke="#c8c8c8" stroke-width="1.1"/></svg>
<div class="a" style="left:334.5px;top:548.5px;width:10.5px;height:10.8px;background:#212121;"></div>
<div class="a" style="left:351px;top:548.6px;width:44px;height:10.6px;background:#1b1b1b;"></div>
<div class="t" style="left:357px;top:547.7px;font-size:9px;color:#dedede;transform:scaleX(0.985);-webkit-text-stroke:.2px;">None</div>
<svg style="left:385px;top:552.1px" width="6.5" height="4" viewBox="0 0 6.5 4"><path d="M0.5 0.5 L3.25 3.3 L6 0.5" fill="none" stroke="#c8c8c8" stroke-width="1.1"/></svg>
<div class="a" style="left:633px;top:547px;width:87px;height:14.25px;background:#80809a;border-bottom:1.2px solid rgba(0,0,0,.6)"></div>
<div class="a" style="left:26.7px;top:562.75px;width:10.3px;height:10.8px;background:#212121;"></div>
<div class="a" style="left:39px;top:562.75px;width:10.3px;height:10.8px;background:#212121;"></div>
<div class="a" style="left:403.8px;top:562.75px;width:11.4px;height:10.8px;background:#212121;"></div>
<div class="a" style="left:416.8px;top:562.75px;width:9.9px;height:10.8px;background:#212121;"></div>
<div class="a" style="left:428.4px;top:562.75px;width:11.3px;height:10.8px;background:#212121;"></div>
<div class="a" style="left:441.4px;top:562.75px;width:10.6px;height:10.8px;background:#212121;"></div>
<div class="a" style="left:466.7px;top:562.75px;width:10.4px;height:10.8px;background:#212121;"></div>
<div class="a" style="left:479.4px;top:562.75px;width:10.4px;height:10.8px;background:#212121;"></div>
<div class="a" style="left:491.7px;top:562.75px;width:10.7px;height:10.8px;background:#212121;"></div>
<svg style="left:2px;top:564.65px" width="9.8" height="6.2" viewBox="0 0 9.8 6.2"><path d="M0 3.3 Q4.9 -2.6 9.8 3.3 Q4.9 9.2 0 3.3Z" fill="#d9d9d9"/><circle cx="4.9" cy="3.3" r="1.6" fill="#2a2a2a"/><circle cx="5.5" cy="2.7" r=".5" fill="#d9d9d9"/></svg>
<svg style="left:59.3px;top:565.05px" width="4" height="7.2" viewBox="0 0 4 7.2"><path d="M0.6 0.5 L3.3 3.6 L0.6 6.7" fill="none" stroke="#9a9a9a" stroke-width="1.4"/></svg>
<div class="a" style="left:69px;top:562.85px;width:10.3px;height:10.2px;background:#bfbde4;"></div>
<div class="t" style="left:87.2px;top:561.05px;font-size:9.6px;color:#d8d8d8;transform:scaleX(0.950);">28</div>
<svg style="left:113.2px;top:562.65px" width="8.8" height="10.4" viewBox="0 0 8.8 10.4"><rect x="0.4" y="0.4" width="8" height="9.6" fill="#3a1a07" stroke="#633414" stroke-width=".8"/><path d="M3 7.6 L4.1 2.4 L5 2.4 L6.2 7.6 L5.2 7.6 L4.6 4.6 L4 7.6Z" fill="#d8742a"/><ellipse cx="4.5" cy="7.6" rx="1" ry="1" fill="#f3c7a2"/></svg>
<div class="t" style="left:128.2px;top:562.05px;font-size:9.5px;color:#dedede;transform:scaleX(1.037);-webkit-text-stroke:.2px;">Line_3</div>
<svg style="left:404.2px;top:562.85px" width="10.4" height="9.4" viewBox="0 0 10.4 9.4"><path d="M1.2 6.9 V4.2 Q1.2 0.3 5.2 0.3 Q9.2 0.3 9.2 4.2 V6.9Z" fill="#cfcfcf"/><rect x="0" y="6.6" width="10.4" height="1" fill="#cfcfcf"/><rect x="2.9" y="3.4" width="1.3" height="3.1" fill="#212121"/><rect x="6.2" y="3.4" width="1.3" height="3.1" fill="#212121"/><rect x="4.4" y="4" width="1.6" height="5.2" rx=".7" fill="#e6e6e6"/></svg>
<svg style="left:429.7px;top:563.15px" width="9.4" height="9.2" viewBox="0 0 9.4 9.2"><path d="M0.8 8.6 L8.8 0.6" stroke="#cfcfcf" stroke-width="1.4" stroke-linecap="round"/></svg>
<svg style="left:518.6px;top:562.65px" width="10.4" height="10.4" viewBox="0 0 10 10"><path d="M5.3 5.9 Q4 5.2 4.6 3.9 Q5.8 2.8 7 4 Q8 5.8 6.4 7.3 Q4.2 8.5 2.6 6.6 Q1.2 4.2 3 2.2 Q5.4 0.4 7.8 2 Q9.2 3.4 9 5.4" fill="none" stroke="#bcbcbc" stroke-width="1.25" stroke-linecap="round"/></svg>
<div class="a" style="left:535.2px;top:562.85px;width:74.2px;height:10.6px;background:#1b1b1b;"></div>
<div class="t" style="left:540.8px;top:561.95px;font-size:9px;color:#dedede;transform:scaleX(0.985);-webkit-text-stroke:.2px;">None</div>
<svg style="left:599px;top:566.35px" width="6.5" height="4" viewBox="0 0 6.5 4"><path d="M0.5 0.5 L3.25 3.3 L6 0.5" fill="none" stroke="#c8c8c8" stroke-width="1.1"/></svg>
<div class="a" style="left:282px;top:562.85px;width:48px;height:10.6px;background:#1b1b1b;"></div>
<div class="t" style="left:288px;top:561.95px;font-size:9px;color:#dedede;transform:scaleX(0.985);-webkit-text-stroke:.2px;">Norma</div>
<svg style="left:320px;top:566.35px" width="6.5" height="4" viewBox="0 0 6.5 4"><path d="M0.5 0.5 L3.25 3.3 L6 0.5" fill="none" stroke="#c8c8c8" stroke-width="1.1"/></svg>
<div class="a" style="left:334.5px;top:562.75px;width:10.5px;height:10.8px;background:#212121;"></div>
<div class="a" style="left:351px;top:562.85px;width:44px;height:10.6px;background:#1b1b1b;"></div>
<div class="t" style="left:357px;top:561.95px;font-size:9px;color:#dedede;transform:scaleX(0.985);-webkit-text-stroke:.2px;">None</div>
<svg style="left:385px;top:566.35px" width="6.5" height="4" viewBox="0 0 6.5 4"><path d="M0.5 0.5 L3.25 3.3 L6 0.5" fill="none" stroke="#c8c8c8" stroke-width="1.1"/></svg>
<div class="a" style="left:633px;top:561.25px;width:87px;height:14.25px;background:#80809a;border-bottom:1.2px solid rgba(0,0,0,.6)"></div>
</div></div>
<div class="a" style="left:627.2px;top:237px;width:92.8px;height:45px;background:#222222;"></div>
<div class="a" style="left:627.2px;top:249px;width:92.8px;height:17px;background:#202020;"></div>
<div class="a" style="left:625.4px;top:237px;width:1.6px;height:45px;background:#191919;"></div>
<div class="a" style="left:627px;top:241.6px;width:93px;height:7px;background:#6c6c6c;"></div>
<div class="a" style="left:626.6px;top:241.2px;width:5.8px;height:7.8px;background:#3c8de0;border-radius:4px 0 0 4px"></div>
<div class="t" style="left:627px;top:248.4px;font-size:9.8px;color:#d0d0d0;transform:scaleX(0.972);">:00s</div>
<div class="t" style="left:694.3px;top:248.4px;font-size:9.8px;color:#d0d0d0;transform:scaleX(0.886);">02s</div>
<div class="a" style="left:632.8px;top:259.6px;width:1px;height:5.6px;background:#d0d0d0;"></div>
<div class="a" style="left:701.6px;top:261px;width:1px;height:4.2px;background:#9a9a9a;"></div>
<div class="a" style="left:627px;top:266px;width:93px;height:11.8px;background:#686868;"></div>
<div class="a" style="left:626.8px;top:265.6px;width:5.7px;height:13.4px;background:#3c8de0;border-radius:4px 0 0 4px"></div>
<div class="a" style="left:632.5px;top:279px;width:87.5px;height:3.2px;background:#35b846;"></div>
<div class="a" style="left:0px;top:565px;width:720px;height:14px;background:#1c1c1c;"></div>
<svg style="left:2px;top:567px" width="10.6" height="11.2" viewBox="0 0 10.6 11.2"><rect x="0" y="0" width="10.6" height="11.2" rx="1.5" fill="#0f2142"/><circle cx="3.8" cy="3.8" r="2.9" fill="none" stroke="#3b7de0" stroke-width="1.2"/><circle cx="5.6" cy="5.6" r="2.9" fill="none" stroke="#3b7de0" stroke-width="1.2"/><rect x="5.4" y="6" width="4.4" height="4.4" fill="#0f2142" stroke="#3b7de0" stroke-width="1.1"/><path d="M6.6 7.6 H8.6 L7.6 9Z" fill="#3b7de0"/></svg>
<svg style="left:17.6px;top:567px" width="10" height="10" viewBox="0 0 10 10"><rect x="0" y="0" width="10" height="10" rx="1.5" fill="#0f2142"/><circle cx="4" cy="4" r="3" fill="none" stroke="#3b7de0" stroke-width="1.2"/><rect x="4.6" y="4.6" width="4.6" height="4.6" fill="#0f2142" stroke="#3b7de0" stroke-width="1.1"/><path d="M5.4 8.4 L8.4 5.4 V8.4Z" fill="#3b7de0"/></svg>
<svg style="left:32.6px;top:567.4px" width="10.4" height="9.4" viewBox="0 0 10.4 9.4"><path d="M3.4 0.5 Q1.8 0.5 1.8 2 V3.4 Q1.8 4.7 0.4 4.7 Q1.8 4.7 1.8 6 V7.4 Q1.8 8.9 3.4 8.9 M7 0.5 Q8.6 0.5 8.6 2 V3.4 Q8.6 4.7 10 4.7 Q8.6 4.7 8.6 6 V7.4 Q8.6 8.9 7 8.9" fill="none" stroke="#e6e6e6" stroke-width="1.4"/><path d="M4.3 0.4 V9 M6.1 0.4 V9" stroke="#e6e6e6" stroke-width=".9" stroke-dasharray="1 .8"/></svg>
<svg style="left:631.8px;top:570.2px" width="7.8" height="4.4" viewBox="0 0 7.8 4.4"><path d="M0 3 L2.6 3 L4 0.4 L5.6 3 L7.8 3 V4.4 H0Z" fill="#e0e0e0"/></svg>
<div class="a" style="left:657.5px;top:571px;width:31.4px;height:1.6px;background:#444444;"></div>
<svg style="left:648.8px;top:569.2px" width="8.4" height="8.4" viewBox="0 0 8.4 8.4"><circle cx="4.2" cy="4.2" r="3.3" fill="#1c1c1c" stroke="#bcbcbc" stroke-width="1.5"/></svg>
<svg style="left:699px;top:569.2px" width="13.6" height="6" viewBox="0 0 13.6 6"><path d="M0 6 L4.4 0.8 L6 3 L8.4 0 L13.6 6Z" fill="#e0e0e0"/><path d="M4.4 6 L5.9 4 L7.4 6Z" fill="#1c1c1c"/></svg>
<div class="a" id="menu" style="left:214.4px;top:34.2px;width:187.2px;height:494px;background:#f2f2f2;box-shadow:2px 2px 5px rgba(0,0,0,.55)">
<div class="t" style="left:30px;top:5.2px;font-size:11px;color:#1a1a1a;transform:scaleX(0.890);">Mask</div>
<svg style="left:174.6px;top:8.2px" width="5" height="8" viewBox="0 0 5 8"><path d="M0.7 0.7 L4 4 L0.7 7.3" fill="none" stroke="#3a3a3a" stroke-width="1.2"/></svg>
<div class="t" style="left:30px;top:23.8px;font-size:11px;color:#1a1a1a;transform:scaleX(0.876);">Mask and Shape Path</div>
<svg style="left:174.6px;top:26.8px" width="5" height="8" viewBox="0 0 5 8"><path d="M0.7 0.7 L4 4 L0.7 7.3" fill="none" stroke="#3a3a3a" stroke-width="1.2"/></svg>
<div class="t" style="left:30px;top:42.4px;font-size:11px;color:#1a1a1a;transform:scaleX(0.926);">Quality</div>
<svg style="left:174.6px;top:45.4px" width="5" height="8" viewBox="0 0 5 8"><path d="M0.7 0.7 L4 4 L0.7 7.3" fill="none" stroke="#3a3a3a" stroke-width="1.2"/></svg>
<div class="t" style="left:30px;top:61px;font-size:11px;color:#1a1a1a;transform:scaleX(0.875);">Switches</div>
<svg style="left:174.6px;top:64px" width="5" height="8" viewBox="0 0 5 8"><path d="M0.7 0.7 L4 4 L0.7 7.3" fill="none" stroke="#3a3a3a" stroke-width="1.2"/></svg>
<div class="t" style="left:30px;top:79.6px;font-size:11px;color:#1a1a1a;transform:scaleX(0.883);">Transform</div>
<svg style="left:174.6px;top:82.6px" width="5" height="8" viewBox="0 0 5 8"><path d="M0.7 0.7 L4 4 L0.7 7.3" fill="none" stroke="#3a3a3a" stroke-width="1.2"/></svg>
<div class="t" style="left:30px;top:98.2px;font-size:11px;color:#1a1a1a;transform:scaleX(0.903);">Time</div>
<svg style="left:174.6px;top:101.2px" width="5" height="8" viewBox="0 0 5 8"><path d="M0.7 0.7 L4 4 L0.7 7.3" fill="none" stroke="#3a3a3a" stroke-width="1.2"/></svg>
<div class="t" style="left:30px;top:116.8px;font-size:11px;color:#1a1a1a;transform:scaleX(0.894);">Frame Blending</div>
<svg style="left:174.6px;top:119.8px" width="5" height="8" viewBox="0 0 5 8"><path d="M0.7 0.7 L4 4 L0.7 7.3" fill="none" stroke="#3a3a3a" stroke-width="1.2"/></svg>
<div class="t" style="left:30px;top:135.5px;font-size:11px;color:#1a1a1a;transform:scaleX(0.840);">3D Layer</div>
<div class="t" style="left:30px;top:154.1px;font-size:11px;color:#1a1a1a;transform:scaleX(0.868);">Guide Layer</div>
<div class="t" style="left:30px;top:172.8px;font-size:11px;color:#8c8c8c;transform:scaleX(0.903);">Environment Layer</div>
<div class="t" style="left:30px;top:191.4px;font-size:11px;color:#1a1a1a;transform:scaleX(0.881);">Markers</div>
<svg style="left:174.6px;top:194.4px" width="5" height="8" viewBox="0 0 5 8"><path d="M0.7 0.7 L4 4 L0.7 7.3" fill="none" stroke="#3a3a3a" stroke-width="1.2"/></svg>
<div class="t" style="left:30px;top:210px;font-size:11px;color:#1a1a1a;transform:scaleX(0.929);">Blending Mode</div>
<svg style="left:174.6px;top:213px" width="5" height="8" viewBox="0 0 5 8"><path d="M0.7 0.7 L4 4 L0.7 7.3" fill="none" stroke="#3a3a3a" stroke-width="1.2"/></svg>
<div class="t" style="left:30px;top:228.6px;font-size:11px;color:#1a1a1a;transform:scaleX(0.839);">Layer Styles</div>
<svg style="left:174.6px;top:231.6px" width="5" height="8" viewBox="0 0 5 8"><path d="M0.7 0.7 L4 4 L0.7 7.3" fill="none" stroke="#3a3a3a" stroke-width="1.2"/></svg>
<div class="t" style="left:30px;top:253.2px;font-size:11px;color:#1a1a1a;transform:scaleX(0.885);">Effect</div>
<svg style="left:174.6px;top:256.2px" width="5" height="8" viewBox="0 0 5 8"><path d="M0.7 0.7 L4 4 L0.7 7.3" fill="none" stroke="#3a3a3a" stroke-width="1.2"/></svg>
<div class="t" style="left:30px;top:271.8px;font-size:11px;color:#1a1a1a;transform:scaleX(0.891);">Keyframe Assistant</div>
<svg style="left:174.6px;top:274.8px" width="5" height="8" viewBox="0 0 5 8"><path d="M0.7 0.7 L4 4 L0.7 7.3" fill="none" stroke="#3a3a3a" stroke-width="1.2"/></svg>
<div class="t" style="left:30px;top:290.4px;font-size:11px;color:#1a1a1a;transform:scaleX(0.883);">Track &amp; Stabilize</div>
<svg style="left:174.6px;top:293.4px" width="5" height="8" viewBox="0 0 5 8"><path d="M0.7 0.7 L4 4 L0.7 7.3" fill="none" stroke="#3a3a3a" stroke-width="1.2"/></svg>
<div class="t" style="left:30px;top:315.1px;font-size:11px;color:#1a1a1a;transform:scaleX(0.881);">Open</div>
<svg style="left:174.6px;top:318.1px" width="5" height="8" viewBox="0 0 5 8"><path d="M0.7 0.7 L4 4 L0.7 7.3" fill="none" stroke="#3a3a3a" stroke-width="1.2"/></svg>
<div class="t" style="left:30px;top:333.6px;font-size:11px;color:#1a1a1a;transform:scaleX(0.812);">Reveal</div>
<svg style="left:174.6px;top:336.6px" width="5" height="8" viewBox="0 0 5 8"><path d="M0.7 0.7 L4 4 L0.7 7.3" fill="none" stroke="#3a3a3a" stroke-width="1.2"/></svg>
<div class="t" style="left:30px;top:352.1px;font-size:11px;color:#1a1a1a;transform:scaleX(0.857);">Create</div>
<svg style="left:174.6px;top:355.1px" width="5" height="8" viewBox="0 0 5 8"><path d="M0.7 0.7 L4 4 L0.7 7.3" fill="none" stroke="#3a3a3a" stroke-width="1.2"/></svg>
<div class="t" style="left:30px;top:376.8px;font-size:11px;color:#1a1a1a;transform:scaleX(0.879);">Camera</div>
<svg style="left:174.6px;top:379.8px" width="5" height="8" viewBox="0 0 5 8"><path d="M0.7 0.7 L4 4 L0.7 7.3" fill="none" stroke="#3a3a3a" stroke-width="1.2"/></svg>
<div class="a" style="left:-2.2px;top:388.8px;width:192.6px;height:27.5px;background:#a3cff7;border:4.6px solid #1592ee;border-radius:5px;box-shadow:inset 0 0 0 1px #8cc0f0"></div>
<div class="t" style="left:30px;top:395.8px;font-size:11px;color:#1a1a1a;transform:scaleX(0.906);">Pre-compose...</div>
<div class="t" style="left:30px;top:420px;font-size:11px;color:#1a1a1a;transform:scaleX(0.899);">Invert Selection</div>
<div class="t" style="left:30px;top:438.5px;font-size:11px;color:#1a1a1a;transform:scaleX(0.891);">Select Children</div>
<div class="t" style="left:30px;top:457.1px;font-size:11px;color:#1a1a1a;transform:scaleX(0.875);">Rename</div>
<div class="t" style="left:30px;top:476px;font-size:11px;color:#8c8c8c;transform:scaleX(0.891);">Add to Essential Graphics</div>
<div class="a" style="left:26.6px;top:248.8px;width:159px;height:1px;background:#d9d9d9;"></div>
<div class="a" style="left:26.6px;top:309.9px;width:159px;height:1px;background:#d9d9d9;"></div>
<div class="a" style="left:26.6px;top:371.3px;width:159px;height:1px;background:#d9d9d9;"></div>
</div>
</body></html>
